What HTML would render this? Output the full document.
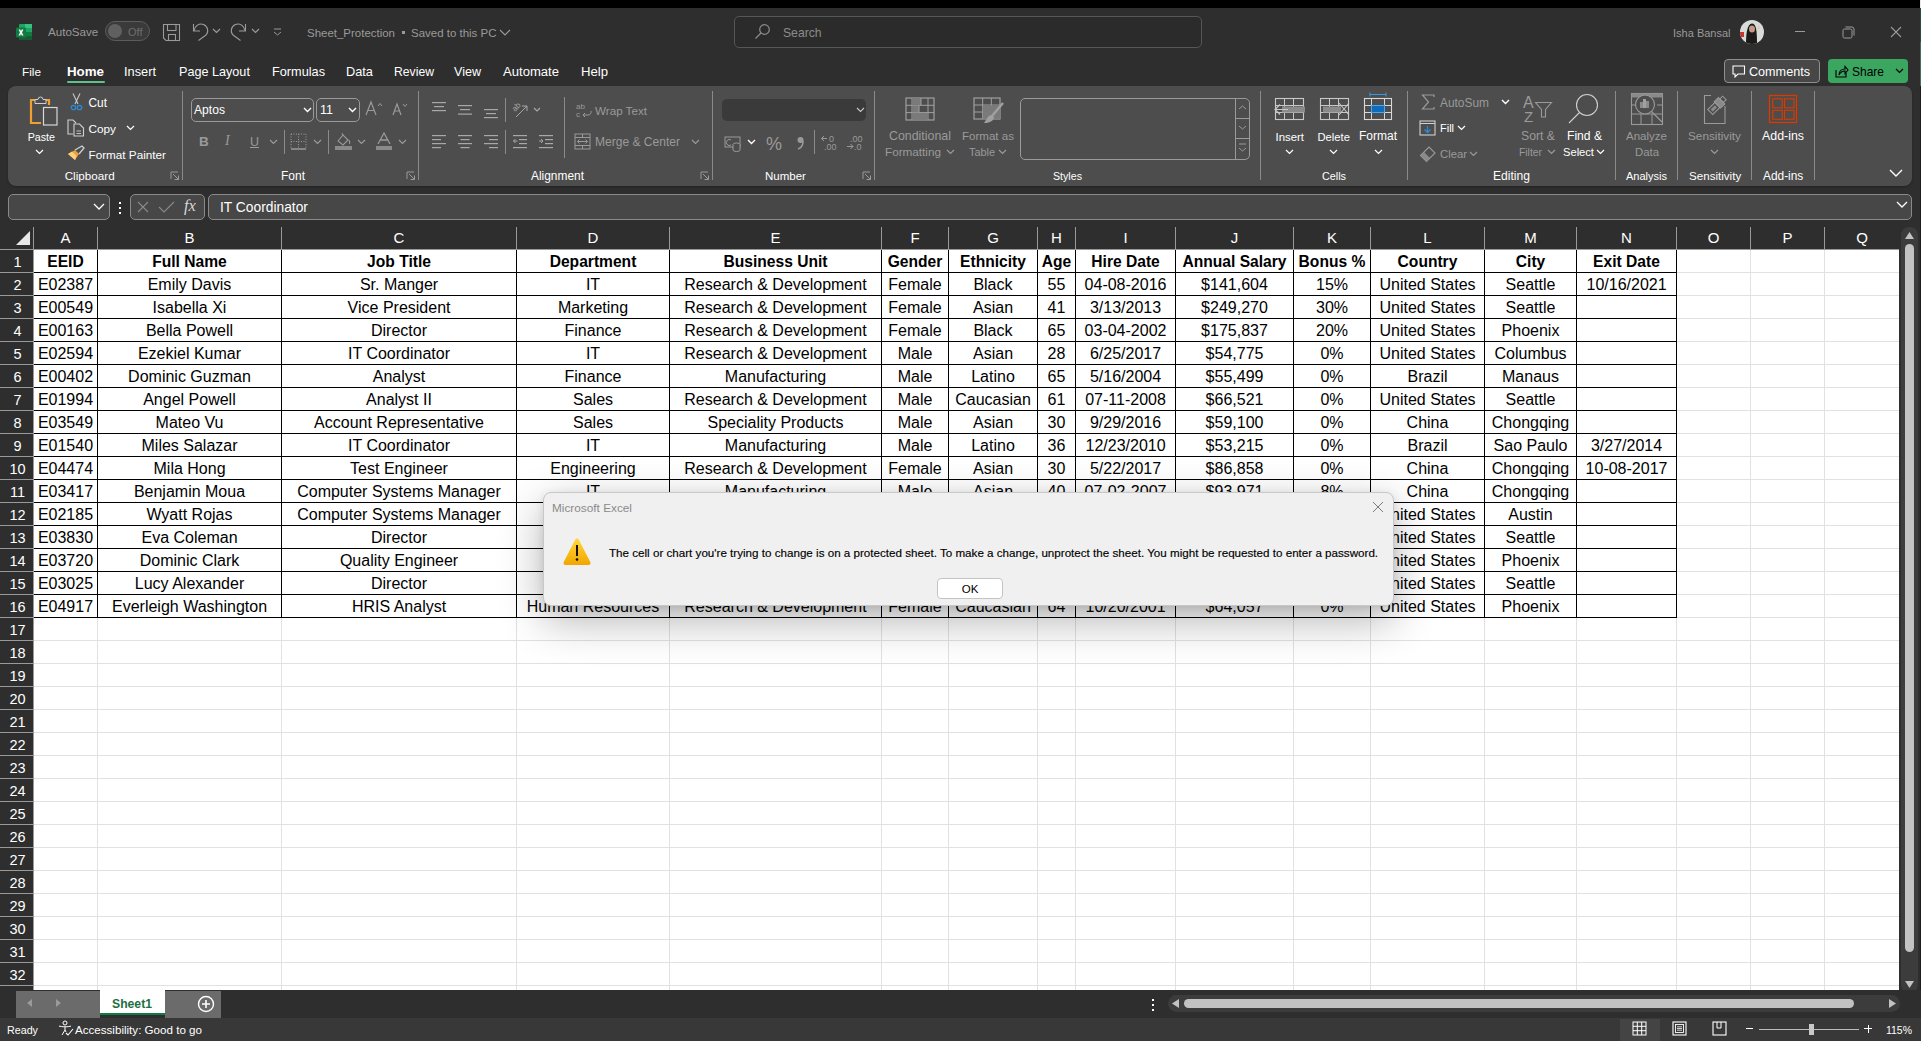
<!DOCTYPE html>
<html><head><meta charset="utf-8">
<style>
*{box-sizing:border-box;margin:0;padding:0}
html,body{width:1921px;height:1041px;overflow:hidden;background:#2e2e2e;font-family:"Liberation Sans",sans-serif;position:relative}
.a{position:absolute}
.s{position:absolute;overflow:visible}
.t{position:absolute;white-space:nowrap}
</style></head><body>
<div class="a" style="left:0;top:0;width:1921px;height:8px;background:#000"></div>
<div class="a" style="left:8px;top:86px;width:1904px;height:100px;background:#4d4d4d;border-radius:8px;box-shadow:0 1px 2px rgba(0,0,0,0.3)"></div>
<svg class="s" style="left:16px;top:24px;" width="17" height="17" viewBox="0 0 17 17"><rect x="3" y="0" width="13" height="16" rx="1" fill="#21a366"/>
<rect x="9" y="0" width="7" height="4" fill="#33c481"/><rect x="9" y="4" width="7" height="4" fill="#21a366"/>
<rect x="9" y="8" width="7" height="4" fill="#107c41"/><rect x="3" y="12" width="13" height="4" fill="#185c37"/>
<rect x="0" y="3.5" width="10" height="10" rx="1" fill="#107c41"/>
<path d="M2.6,5.6 L4.3,5.6 L5,7.3 L5.8,5.6 L7.4,5.6 L6,8.5 L7.5,11.4 L5.8,11.4 L5,9.7 L4.2,11.4 L2.5,11.4 L4,8.5 Z" fill="#fff"/></svg>
<div class="t" style="left:48.0px;top:26px;font-size:11.60px;line-height:12px;color:#9a9a9a;">AutoSave</div>
<div class="a" style="left:105px;top:21px;width:45px;height:20px;border:1.5px solid #5c5c5c;border-radius:10px;background:#3a3a3a"></div>
<div class="a" style="left:108px;top:24px;width:14px;height:14px;border-radius:50%;background:#606060"></div>
<div class="t" style="left:128.0px;top:26px;font-size:11.00px;line-height:12px;color:#6e6e6e;">Off</div>
<svg class="s" style="left:162px;top:22px;" width="19" height="19" viewBox="0 0 19 19"><path d="M1.5,2.5 H17.5 V18.5 H4 L1.5,16 Z" fill="none" stroke="#9a9a9a" stroke-width="1.1"/><rect x="5.5" y="2.5" width="8.5" height="6" fill="none" stroke="#9a9a9a" stroke-width="1.1"/><rect x="6.5" y="12.5" width="7" height="6" fill="none" stroke="#9a9a9a" stroke-width="1.1"/></svg>
<svg class="s" style="left:190px;top:21px;" width="20" height="22" viewBox="0 0 20 22"><path d="M3.5,3 V10 H10" fill="none" stroke="#9a9a9a" stroke-width="1.1"/><path d="M4.5,9.5 A6.6,6.6 0 1 1 16,14 L8.5,19.5" fill="none" stroke="#9a9a9a" stroke-width="1.1"/></svg>
<svg class="s" style="left:212px;top:28px;" width="9" height="6" viewBox="0 0 9 6"><polyline points="1,1 4.5,4.5 8,1" fill="none" stroke="#9a9a9a" stroke-width="1.2"/></svg>
<svg class="s" style="left:229px;top:21px;" width="20" height="22" viewBox="0 0 20 22"><g transform="translate(20,0) scale(-1,1)"><path d="M3.5,3 V10 H10" fill="none" stroke="#9a9a9a" stroke-width="1.1"/><path d="M4.5,9.5 A6.6,6.6 0 1 1 16,14 L8.5,19.5" fill="none" stroke="#9a9a9a" stroke-width="1.1"/></g></svg>
<svg class="s" style="left:251px;top:28px;" width="9" height="6" viewBox="0 0 9 6"><polyline points="1,1 4.5,4.5 8,1" fill="none" stroke="#9a9a9a" stroke-width="1.2"/></svg>
<svg class="s" style="left:272px;top:26px;" width="11" height="11" viewBox="0 0 11 11"><line x1="2" y1="3" x2="9" y2="3" stroke="#9a9a9a" stroke-width="1"/><polyline points="2,6 5.5,9 9,6" fill="none" stroke="#9a9a9a" stroke-width="1"/></svg>
<div class="t" style="left:307.0px;top:27px;font-size:11.47px;line-height:12px;color:#9a9a9a;">Sheet_Protection</div>
<div class="a" style="left:402px;top:31px;width:3px;height:3px;background:#9a9a9a"></div>
<div class="t" style="left:411.0px;top:27px;font-size:11.47px;line-height:12px;color:#9a9a9a;">Saved to this PC</div>
<svg class="s" style="left:499px;top:29px;" width="12" height="8" viewBox="0 0 12 8"><polyline points="1,1 6.0,6.0 11,1" fill="none" stroke="#9a9a9a" stroke-width="1.1"/></svg>
<div class="a" style="left:734px;top:16px;width:468px;height:32px;border:1px solid #565656;border-radius:5px;background:#2b2b2b"></div>
<svg class="s" style="left:754px;top:23px;" width="17" height="17" viewBox="0 0 17 17"><circle cx="10.5" cy="6.5" r="4.8" fill="none" stroke="#8c8c8c" stroke-width="1.2"/><line x1="7" y1="10" x2="1.5" y2="15.5" stroke="#8c8c8c" stroke-width="1.3"/></svg>
<div class="t" style="left:783.0px;top:26px;font-size:12.18px;line-height:14px;color:#8c8c8c;">Search</div>
<div class="t" style="left:1673.0px;top:27px;font-size:11.02px;line-height:12px;color:#9a9a9a;">Isha Bansal</div>
<svg class="s" style="left:1740px;top:20px;" width="24" height="24" viewBox="0 0 24 24"><defs><clipPath id="av"><circle cx="12" cy="12" r="12"/></clipPath></defs><g clip-path="url(#av)"><rect width="24" height="24" fill="#d8dcd8"/><path d="M6,24 C6,14 7,4 12,3.5 C16,3.5 17,10 17,24 Z" fill="#1b1b1b"/><ellipse cx="12" cy="9" rx="3" ry="3.6" fill="#c49a84"/><rect x="0" y="12" width="4" height="5" fill="#c8332c"/><path d="M17,9 L19,5 L20,9 Z" fill="#e8c8b0"/></g></svg>
<div class="a" style="left:1795px;top:31px;width:10px;height:1px;background:#9a9a9a"></div>
<svg class="s" style="left:1842px;top:26px;" width="13" height="13" viewBox="0 0 13 13"><rect x="1" y="3" width="9" height="9" rx="1.5" fill="none" stroke="#9a9a9a" stroke-width="1"/><path d="M3.5,1 H10 A2,2 0 0 1 12,3 V9.5" fill="none" stroke="#9a9a9a" stroke-width="1"/></svg>
<svg class="s" style="left:1890px;top:26px;" width="12" height="12" viewBox="0 0 12 12"><path d="M1,1 L11,11 M11,1 L1,11" stroke="#9a9a9a" stroke-width="1.1"/></svg>
<div class="a" style="left:1920px;top:8px;width:1px;height:1033px;background:#1c1c1c"></div>
<div class="a" style="left:1920px;top:0px;width:1px;height:8px;background:#e8e8e8"></div>
<div class="a" style="left:1920px;top:8px;width:1px;height:34px;background:#2e4843"></div>
<div class="a" style="left:1920px;top:42px;width:1px;height:44px;background:#4c6a64"></div>
<div class="t" style="left:22.0px;top:65px;font-size:11.79px;line-height:13px;color:#ffffff;">File</div>
<div class="t" style="left:67.0px;top:64px;font-size:13.32px;line-height:15px;color:#ffffff;font-weight:bold;">Home</div>
<div class="t" style="left:124.0px;top:64px;font-size:12.79px;line-height:15px;color:#ffffff;">Insert</div>
<div class="t" style="left:179.0px;top:65px;font-size:12.64px;line-height:14px;color:#ffffff;">Page Layout</div>
<div class="t" style="left:272.0px;top:64px;font-size:12.72px;line-height:15px;color:#ffffff;">Formulas</div>
<div class="t" style="left:346.0px;top:64px;font-size:12.78px;line-height:15px;color:#ffffff;">Data</div>
<div class="t" style="left:394.0px;top:65px;font-size:12.20px;line-height:14px;color:#ffffff;">Review</div>
<div class="t" style="left:454.0px;top:65px;font-size:12.56px;line-height:14px;color:#ffffff;">View</div>
<div class="t" style="left:503.0px;top:64px;font-size:13.08px;line-height:15px;color:#ffffff;">Automate</div>
<div class="t" style="left:581.0px;top:64px;font-size:13.13px;line-height:15px;color:#ffffff;">Help</div>
<div class="a" style="left:67px;top:81px;width:38px;height:2px;background:#5cc48b;border-radius:1px"></div>
<div class="a" style="left:1724px;top:59px;width:96px;height:24px;border:1px solid #8f8f8f;border-radius:4px;background:#474747"></div>
<svg class="s" style="left:1732px;top:65px;" width="14" height="13" viewBox="0 0 14 13"><path d="M1,1 H12.5 V9 H6 L3,12 V9 H1 Z" fill="none" stroke="#fff" stroke-width="1.1"/></svg>
<div class="t" style="left:1749.0px;top:65px;font-size:12.62px;line-height:14px;color:#fff;">Comments</div>
<div class="a" style="left:1828px;top:59px;width:80px;height:24px;border-radius:4px;background:#3aa660"></div>
<svg class="s" style="left:1835px;top:65px;" width="14" height="13" viewBox="0 0 14 13"><path d="M1,5 V12 H11 V8" fill="none" stroke="#000" stroke-width="1.1"/><path d="M4,10 C4,6 7,4 10,4 V1.5 L13,5 L10,8.5 V6 C8,6 5.5,7 4,10 Z" fill="none" stroke="#000" stroke-width="1.1"/></svg>
<div class="t" style="left:1852.0px;top:65px;font-size:11.99px;line-height:14px;color:#000;">Share</div>
<svg class="s" style="left:1895px;top:68px;" width="9" height="6" viewBox="0 0 9 6"><polyline points="1,1 4.5,4.5 8,1" fill="none" stroke="#000" stroke-width="1.2"/></svg>
<svg class="s" style="left:28px;top:94px;" width="31" height="33" viewBox="0 0 31 33"><path d="M3,6 H7 M14,6 H21 V11" fill="none" stroke="#f0a030" stroke-width="2.2"/><path d="M3,5 V29 H13" fill="none" stroke="#f0a030" stroke-width="2.2"/>
<path d="M7,9.5 V5.5 H10 A2.5,2.5 0 0 1 15,5.5 H18 V9.5 Z" fill="#4d4d4d" stroke="#d0d0d0" stroke-width="1"/>
<rect x="15.5" y="13.5" width="13.5" height="17.5" fill="#4d4d4d" stroke="#d8d8d8" stroke-width="1.2"/></svg>
<div class="t" style="left:27.7px;top:131px;font-size:10.68px;line-height:12px;color:#fff;">Paste</div>
<svg class="s" style="left:35px;top:149px;" width="9" height="6" viewBox="0 0 9 6"><polyline points="1,1 4.5,4.5 8,1" fill="none" stroke="#fff" stroke-width="1.2"/></svg>
<svg class="s" style="left:70px;top:93px;" width="13" height="18" viewBox="0 0 13 18"><path d="M3,0.5 L8,11 M10,0.5 L5,11" stroke="#c8c8c8" stroke-width="1.1" fill="none"/><circle cx="3.5" cy="14.5" r="2.2" fill="none" stroke="#2a8ad8" stroke-width="1.3"/><circle cx="9.5" cy="14.5" r="2.2" fill="none" stroke="#2a8ad8" stroke-width="1.3"/></svg>
<div class="t" style="left:88.5px;top:96px;font-size:11.89px;line-height:14px;color:#fff;">Cut</div>
<svg class="s" style="left:67px;top:119px;" width="18" height="18" viewBox="0 0 18 18"><path d="M6,15 H1 V1 H6 L9,4" fill="none" stroke="#d0d0d0" stroke-width="1.1"/><path d="M7,5 H12.5 L16.5,9 V17 H7 Z" fill="#4d4d4d" stroke="#d0d0d0" stroke-width="1.1"/><path d="M9.5,12 H14 M9.5,14.5 H14" stroke="#d0d0d0" stroke-width="0.9"/></svg>
<div class="t" style="left:88.5px;top:122px;font-size:11.78px;line-height:13px;color:#fff;">Copy</div>
<svg class="s" style="left:126px;top:125px;" width="9" height="6" viewBox="0 0 9 6"><polyline points="1,1 4.5,4.5 8,1" fill="none" stroke="#fff" stroke-width="1.2"/></svg>
<svg class="s" style="left:67px;top:145px;" width="18" height="18" viewBox="0 0 18 18"><path d="M1,9 L8,15 L12,9 L8,5 Z" fill="#f0a030"/><path d="M1,9 L5,6.5 L9.5,11 L8,15 Z" fill="#f7d080"/><path d="M8,5 L15,1 L17,3 L12,9" fill="none" stroke="#d0d0d0" stroke-width="1.3"/></svg>
<div class="t" style="left:88.5px;top:148px;font-size:11.72px;line-height:13px;color:#fff;">Format Painter</div>
<div class="t" style="left:64.7px;top:169px;font-size:11.68px;line-height:13px;color:#fff;">Clipboard</div>
<svg class="s" style="left:170px;top:171px;" width="10" height="10" viewBox="0 0 10 10"><path d="M1,8 V1 H8" fill="none" stroke="#9a9a9a" stroke-width="1"/><path d="M3,3 L8.5,8.5 M4.5,8.5 H8.5 V4.5" fill="none" stroke="#9a9a9a" stroke-width="1"/></svg>
<div class="a" style="left:182px;top:91px;width:1px;height:89px;background:#8a8a8a"></div>
<div class="a" style="left:191px;top:98px;width:123px;height:24px;border:1px solid #9a9a9a;border-radius:5px"></div>
<div class="t" style="left:194.0px;top:103px;font-size:12.12px;line-height:14px;color:#fff;">Aptos</div>
<svg class="s" style="left:303px;top:107px;" width="9" height="6" viewBox="0 0 9 6"><polyline points="1,1 4.5,4.5 8,1" fill="none" stroke="#fff" stroke-width="1.4"/></svg>
<div class="a" style="left:316px;top:98px;width:44px;height:24px;border:1px solid #9a9a9a;border-radius:5px"></div>
<div class="t" style="left:320.0px;top:103px;font-size:12.50px;line-height:14px;color:#fff;">11</div>
<svg class="s" style="left:348px;top:107px;" width="9" height="6" viewBox="0 0 9 6"><polyline points="1,1 4.5,4.5 8,1" fill="none" stroke="#fff" stroke-width="1.4"/></svg>
<svg class="s" style="left:365px;top:101px;" width="18" height="16" viewBox="0 0 18 16"><path d="M1,14 L6,1 L11,14 M3,9.5 H9" fill="none" stroke="#9a9a9a" stroke-width="1.2"/><polyline points="13,5 15,2.5 17,5" fill="none" stroke="#9a9a9a" stroke-width="1"/></svg>
<svg class="s" style="left:392px;top:102px;" width="17" height="15" viewBox="0 0 17 15"><path d="M1,13 L5,2 L9,13 M2.6,9 H7.4" fill="none" stroke="#9a9a9a" stroke-width="1.2"/><polyline points="11,2 13,4.5 15,2" fill="none" stroke="#9a9a9a" stroke-width="1"/></svg>
<div class="t" style="left:199.0px;top:134px;font-size:13.50px;line-height:15px;color:#9a9a9a;font-weight:bold;">B</div>
<div class="t" style="left:225.0px;top:133px;font-size:14.00px;line-height:16px;color:#9a9a9a;font-family:'Liberation Serif',serif;font-style:italic;">I</div>
<div class="t" style="left:250.0px;top:135px;font-size:12.50px;line-height:14px;color:#9a9a9a;">U</div>
<div class="a" style="left:250px;top:147px;width:9px;height:1px;background:#9a9a9a"></div>
<svg class="s" style="left:269px;top:139px;" width="9" height="6" viewBox="0 0 9 6"><polyline points="1,1 4.5,4.5 8,1" fill="none" stroke="#9a9a9a" stroke-width="1.2"/></svg>
<div class="a" style="left:284px;top:130px;width:1px;height:24px;background:#8a8a8a"></div>
<svg class="s" style="left:290px;top:133px;" width="17" height="17" viewBox="0 0 17 17"><path d="M1,1 H16 M1,8.5 H16 M1,1 V16 M8.5,1 V16 M16,1 V16" fill="none" stroke="#9a9a9a" stroke-width="1" stroke-dasharray="1,1.5"/><line x1="1" y1="16" x2="16" y2="16" stroke="#9a9a9a" stroke-width="1.5"/></svg>
<svg class="s" style="left:313px;top:139px;" width="9" height="6" viewBox="0 0 9 6"><polyline points="1,1 4.5,4.5 8,1" fill="none" stroke="#9a9a9a" stroke-width="1.2"/></svg>
<div class="a" style="left:328px;top:130px;width:1px;height:24px;background:#8a8a8a"></div>
<svg class="s" style="left:334px;top:132px;" width="19" height="20" viewBox="0 0 19 20"><path d="M4,9 L9,3 L14,8 L9,13 Z" fill="none" stroke="#9a9a9a" stroke-width="1.1"/><path d="M9,3 L8,1" stroke="#9a9a9a" stroke-width="1"/><path d="M15,8 C16,10 16,11 15.5,12" fill="none" stroke="#9a9a9a" stroke-width="1.2"/><rect x="1" y="14" width="17" height="4" fill="#8a8a8a"/></svg>
<svg class="s" style="left:357px;top:139px;" width="9" height="6" viewBox="0 0 9 6"><polyline points="1,1 4.5,4.5 8,1" fill="none" stroke="#9a9a9a" stroke-width="1.2"/></svg>
<svg class="s" style="left:375px;top:132px;" width="18" height="20" viewBox="0 0 18 20"><path d="M3,12 L9,1 L15,12 M5.2,8 H12.8" fill="none" stroke="#9a9a9a" stroke-width="1.3"/><rect x="1" y="14" width="16" height="4" fill="#8a8a8a"/></svg>
<svg class="s" style="left:398px;top:139px;" width="9" height="6" viewBox="0 0 9 6"><polyline points="1,1 4.5,4.5 8,1" fill="none" stroke="#9a9a9a" stroke-width="1.2"/></svg>
<div class="t" style="left:281.0px;top:169px;font-size:11.99px;line-height:14px;color:#fff;">Font</div>
<svg class="s" style="left:406px;top:171px;" width="10" height="10" viewBox="0 0 10 10"><path d="M1,8 V1 H8" fill="none" stroke="#9a9a9a" stroke-width="1"/><path d="M3,3 L8.5,8.5 M4.5,8.5 H8.5 V4.5" fill="none" stroke="#9a9a9a" stroke-width="1"/></svg>
<div class="a" style="left:418px;top:91px;width:1px;height:89px;background:#8a8a8a"></div>
<svg class="s" style="left:431px;top:100px;" width="16" height="20" viewBox="0 0 16 20"><rect x="1" y="2" width="14" height="1.2" fill="#a8a8a8"/><rect x="3" y="6" width="10" height="1.2" fill="#a8a8a8"/><rect x="1" y="10" width="14" height="1.2" fill="#a8a8a8"/></svg>
<svg class="s" style="left:457px;top:100px;" width="16" height="20" viewBox="0 0 16 20"><rect x="1" y="5" width="14" height="1.2" fill="#a8a8a8"/><rect x="3" y="9" width="10" height="1.2" fill="#a8a8a8"/><rect x="1" y="13.5" width="14" height="1.2" fill="#a8a8a8"/></svg>
<svg class="s" style="left:483px;top:100px;" width="16" height="20" viewBox="0 0 16 20"><rect x="1" y="9" width="14" height="1.2" fill="#a8a8a8"/><rect x="3" y="13" width="10" height="1.2" fill="#a8a8a8"/><rect x="1" y="17" width="14" height="1.2" fill="#a8a8a8"/></svg>
<div class="a" style="left:505px;top:98px;width:1px;height:24px;background:#8a8a8a"></div>
<svg class="s" style="left:511px;top:100px;" width="19" height="19" viewBox="0 0 19 19"><text x="1" y="9" font-size="8" fill="#a8a8a8" transform="rotate(-45 6 7)" font-family="Liberation Sans">ab</text><path d="M5,17 L16,6 M11,6 H16 V11" fill="none" stroke="#a8a8a8" stroke-width="1"/></svg>
<svg class="s" style="left:533px;top:107px;" width="8" height="6" viewBox="0 0 8 6"><polyline points="1,1 4.0,4.0 7,1" fill="none" stroke="#a8a8a8" stroke-width="1.2"/></svg>
<div class="a" style="left:564px;top:97px;width:1px;height:61px;background:#8a8a8a"></div>
<svg class="s" style="left:576px;top:102px;" width="17" height="17" viewBox="0 0 17 17"><text x="0" y="7" font-size="8" fill="#9a9a9a" font-family="Liberation Sans">ab</text><text x="0" y="15" font-size="8" fill="#9a9a9a" font-family="Liberation Sans">c</text><path d="M15,9 A3,3 0 0 1 12,13 H7 M9,11 L7,13 L9,15" fill="none" stroke="#9a9a9a" stroke-width="1"/></svg>
<div class="t" style="left:595.0px;top:104px;font-size:11.65px;line-height:13px;color:#9a9a9a;">Wrap Text</div>
<svg class="s" style="left:431px;top:133px;" width="16" height="20" viewBox="0 0 16 20"><rect x="1" y="2" width="14" height="1.2" fill="#a8a8a8"/><rect x="1" y="6" width="9" height="1.2" fill="#a8a8a8"/><rect x="1" y="10" width="14" height="1.2" fill="#a8a8a8"/><rect x="1" y="14" width="9" height="1.2" fill="#a8a8a8"/></svg>
<svg class="s" style="left:457px;top:133px;" width="16" height="20" viewBox="0 0 16 20"><rect x="1" y="2" width="14" height="1.2" fill="#a8a8a8"/><rect x="3.5" y="6" width="9" height="1.2" fill="#a8a8a8"/><rect x="1" y="10" width="14" height="1.2" fill="#a8a8a8"/><rect x="3.5" y="14" width="9" height="1.2" fill="#a8a8a8"/></svg>
<svg class="s" style="left:483px;top:133px;" width="16" height="20" viewBox="0 0 16 20"><rect x="1" y="2" width="14" height="1.2" fill="#a8a8a8"/><rect x="6" y="6" width="9" height="1.2" fill="#a8a8a8"/><rect x="1" y="10" width="14" height="1.2" fill="#a8a8a8"/><rect x="6" y="14" width="9" height="1.2" fill="#a8a8a8"/></svg>
<div class="a" style="left:505px;top:130px;width:1px;height:24px;background:#8a8a8a"></div>
<svg class="s" style="left:512px;top:133px;" width="16" height="20" viewBox="0 0 16 20"><rect x="1" y="2" width="14" height="1.2" fill="#a8a8a8"/><rect x="7" y="6" width="8" height="1.2" fill="#a8a8a8"/><rect x="7" y="10" width="8" height="1.2" fill="#a8a8a8"/><rect x="1" y="14" width="14" height="1.2" fill="#a8a8a8"/><path d="M5.5,8 H1.5 M3.5,6 L1.5,8 L3.5,10" fill="none" stroke="#a8a8a8" stroke-width="1"/></svg>
<svg class="s" style="left:538px;top:133px;" width="16" height="20" viewBox="0 0 16 20"><rect x="1" y="2" width="14" height="1.2" fill="#a8a8a8"/><rect x="7" y="6" width="8" height="1.2" fill="#a8a8a8"/><rect x="7" y="10" width="8" height="1.2" fill="#a8a8a8"/><rect x="1" y="14" width="14" height="1.2" fill="#a8a8a8"/><path d="M1,8 H5 M3,6 L5,8 L3,10" fill="none" stroke="#a8a8a8" stroke-width="1"/></svg>
<svg class="s" style="left:574px;top:133px;" width="17" height="17" viewBox="0 0 17 17"><rect x="1" y="1" width="15" height="15" fill="none" stroke="#9a9a9a" stroke-width="1"/><path d="M1,4.5 H16 M1,12.5 H16 M8.5,1 V4.5 M8.5,12.5 V16" stroke="#9a9a9a" stroke-width="1"/><path d="M3.5,8.5 H13.5 M5.5,6.5 L3.5,8.5 L5.5,10.5 M11.5,6.5 L13.5,8.5 L11.5,10.5" fill="none" stroke="#9a9a9a" stroke-width="1"/></svg>
<div class="t" style="left:595.0px;top:135px;font-size:12.04px;line-height:14px;color:#9a9a9a;">Merge &amp; Center</div>
<svg class="s" style="left:691px;top:139px;" width="9" height="6" viewBox="0 0 9 6"><polyline points="1,1 4.5,4.5 8,1" fill="none" stroke="#9a9a9a" stroke-width="1.2"/></svg>
<div class="t" style="left:531.0px;top:169px;font-size:11.92px;line-height:14px;color:#fff;">Alignment</div>
<svg class="s" style="left:700px;top:171px;" width="10" height="10" viewBox="0 0 10 10"><path d="M1,8 V1 H8" fill="none" stroke="#9a9a9a" stroke-width="1"/><path d="M3,3 L8.5,8.5 M4.5,8.5 H8.5 V4.5" fill="none" stroke="#9a9a9a" stroke-width="1"/></svg>
<div class="a" style="left:712px;top:91px;width:1px;height:89px;background:#8a8a8a"></div>
<div class="a" style="left:722px;top:99px;width:144px;height:22px;background:#3a3a3a;border-radius:5px"></div>
<svg class="s" style="left:856px;top:107px;" width="9" height="6" viewBox="0 0 9 6"><polyline points="1,1 4.5,4.5 8,1" fill="none" stroke="#c8c8c8" stroke-width="1.1"/></svg>
<svg class="s" style="left:724px;top:136px;" width="18" height="16" viewBox="0 0 18 16"><rect x="1" y="1" width="15" height="10" fill="none" stroke="#9a9a9a" stroke-width="1"/><path d="M7,4 A3,3 0 1 0 7,9" fill="none" stroke="#9a9a9a" stroke-width="1"/><ellipse cx="12.5" cy="8.5" rx="3.5" ry="1.5" fill="#4d4d4d" stroke="#9a9a9a" stroke-width="1"/><path d="M9,8.5 V14 A3.5,1.5 0 0 0 16,14 V8.5" fill="#4d4d4d" stroke="#9a9a9a" stroke-width="1"/></svg>
<svg class="s" style="left:747px;top:139px;" width="9" height="6" viewBox="0 0 9 6"><polyline points="1,1 4.5,4.5 8,1" fill="none" stroke="#fff" stroke-width="1.4"/></svg>
<div class="t" style="left:766.0px;top:134px;font-size:17.99px;line-height:20px;color:#9a9a9a;">%</div>
<svg class="s" style="left:796px;top:136px;" width="9" height="14" viewBox="0 0 9 14"><circle cx="4.5" cy="4" r="3" fill="#9a9a9a"/><path d="M7,5 C7,9 5,12 2,13" fill="none" stroke="#9a9a9a" stroke-width="1.6"/></svg>
<div class="a" style="left:814px;top:130px;width:1px;height:24px;background:#8a8a8a"></div>
<svg class="s" style="left:820px;top:133px;" width="17" height="18" viewBox="0 0 17 18"><path d="M7,5.5 H1.5 M4,3 L1.5,5.5 L4,8" fill="none" stroke="#9a9a9a" stroke-width="1"/><text x="9" y="9" font-size="9" fill="#9a9a9a" font-family="Liberation Sans">0</text><text x="4" y="17" font-size="9" fill="#9a9a9a" font-family="Liberation Sans">.00</text></svg>
<svg class="s" style="left:846px;top:133px;" width="17" height="18" viewBox="0 0 17 18"><text x="4" y="9" font-size="9" fill="#9a9a9a" font-family="Liberation Sans">.00</text><path d="M1,13.5 H7 M4.5,11 L7,13.5 L4.5,16" fill="none" stroke="#9a9a9a" stroke-width="1"/><text x="8" y="17" font-size="9" fill="#9a9a9a" font-family="Liberation Sans">.0</text></svg>
<div class="t" style="left:765.0px;top:170px;font-size:11.53px;line-height:12px;color:#fff;">Number</div>
<svg class="s" style="left:862px;top:171px;" width="10" height="10" viewBox="0 0 10 10"><path d="M1,8 V1 H8" fill="none" stroke="#9a9a9a" stroke-width="1"/><path d="M3,3 L8.5,8.5 M4.5,8.5 H8.5 V4.5" fill="none" stroke="#9a9a9a" stroke-width="1"/></svg>
<div class="a" style="left:874px;top:91px;width:1px;height:89px;background:#8a8a8a"></div>
<svg class="s" style="left:905px;top:97px;" width="30" height="24" viewBox="0 0 30 24"><rect x="1" y="1" width="28" height="22" fill="none" stroke="#a0a0a0" stroke-width="1.2"/><path d="M1,8.3 H29 M1,15.6 H29 M7,1 V23 M23,1 V23" stroke="#a0a0a0" stroke-width="1"/><rect x="7" y="1.5" width="9" height="6.5" fill="#7a7a7a"/><rect x="7" y="8.8" width="7" height="6.5" fill="#7a7a7a"/><rect x="7" y="16" width="16" height="6.5" fill="#7a7a7a"/><path d="M16,1 V8.3 M14,8.3 V15.6" stroke="#a0a0a0" stroke-width="1"/></svg>
<div class="t" style="left:889.0px;top:129px;font-size:12.39px;line-height:14px;color:#9a9a9a;">Conditional</div>
<div class="t" style="left:885.0px;top:145px;font-size:11.72px;line-height:13px;color:#9a9a9a;">Formatting</div>
<svg class="s" style="left:946px;top:149px;" width="9" height="6" viewBox="0 0 9 6"><polyline points="1,1 4.5,4.5 8,1" fill="none" stroke="#9a9a9a" stroke-width="1.2"/></svg>
<svg class="s" style="left:973px;top:97px;" width="32" height="30" viewBox="0 0 32 30"><rect x="1" y="1" width="26" height="21" fill="none" stroke="#a0a0a0" stroke-width="1.2"/><path d="M1,8 H27 M1,15 H27 M9.7,1 V22 M18.3,1 V22" stroke="#a0a0a0" stroke-width="1"/><rect x="10" y="8.5" width="17" height="13" fill="#7a7a7a"/><path d="M30,6 L19,19" stroke="#a0a0a0" stroke-width="2.5"/><path d="M19,18 C15,18 14,22 11,26 C16,26 21,24 21,20 Z" fill="#a0a0a0"/></svg>
<div class="t" style="left:962.0px;top:130px;font-size:11.55px;line-height:12px;color:#9a9a9a;">Format as</div>
<div class="t" style="left:969.0px;top:146px;font-size:10.88px;line-height:12px;color:#9a9a9a;">Table</div>
<svg class="s" style="left:998px;top:149px;" width="9" height="6" viewBox="0 0 9 6"><polyline points="1,1 4.5,4.5 8,1" fill="none" stroke="#9a9a9a" stroke-width="1.2"/></svg>
<div class="a" style="left:1020px;top:98px;width:230px;height:62px;border:1px solid #9a9a9a;border-radius:5px"></div>
<div class="a" style="left:1235px;top:98px;width:1px;height:62px;background:#9a9a9a"></div>
<div class="a" style="left:1235px;top:118px;width:15px;height:1px;background:#9a9a9a"></div>
<div class="a" style="left:1235px;top:138px;width:15px;height:1px;background:#9a9a9a"></div>
<svg class="s" style="left:1237px;top:104px;" width="11" height="8" viewBox="0 0 11 8"><polyline points="2,5 5.5,2 9,5" fill="none" stroke="#9a9a9a" stroke-width="1"/></svg>
<svg class="s" style="left:1237px;top:124px;" width="11" height="8" viewBox="0 0 11 8"><polyline points="2,2 5.5,5 9,2" fill="none" stroke="#9a9a9a" stroke-width="1"/></svg>
<svg class="s" style="left:1237px;top:142px;" width="11" height="12" viewBox="0 0 11 12"><line x1="2" y1="2" x2="9" y2="2" stroke="#9a9a9a" stroke-width="1"/><polyline points="2,6 5.5,9 9,6" fill="none" stroke="#9a9a9a" stroke-width="1"/></svg>
<div class="t" style="left:1053.0px;top:170px;font-size:10.65px;line-height:12px;color:#fff;">Styles</div>
<div class="a" style="left:1260px;top:91px;width:1px;height:89px;background:#8a8a8a"></div>
<svg class="s" style="left:1273px;top:97px;" width="34" height="24" viewBox="0 0 34 24"><rect x="2.5" y="1.5" width="28" height="21" fill="none" stroke="#c8c8c8" stroke-width="1.1"/><path d="M11.5,1.5 V22.5 M20.5,1.5 V22.5 M2.5,8.5 H30.5 M2.5,15.5 H30.5" stroke="#c8c8c8" stroke-width="1"/><rect x="9" y="9.5" width="23" height="6" fill="#8a8a8a"/><path d="M15,12.5 H2 M7,7.5 L2,12.5 L7,17.5" fill="none" stroke="#c8c8c8" stroke-width="1.1"/></svg>
<div class="t" style="left:1275.5px;top:131px;font-size:11.39px;line-height:12px;color:#fff;">Insert</div>
<svg class="s" style="left:1285px;top:149px;" width="9" height="6" viewBox="0 0 9 6"><polyline points="1,1 4.5,4.5 8,1" fill="none" stroke="#fff" stroke-width="1.2"/></svg>
<svg class="s" style="left:1318px;top:97px;" width="34" height="24" viewBox="0 0 34 24"><rect x="2.5" y="1.5" width="28" height="21" fill="none" stroke="#c8c8c8" stroke-width="1.1"/><path d="M11.5,1.5 V22.5 M20.5,1.5 V22.5 M2.5,8.5 H30.5 M2.5,15.5 H30.5" stroke="#c8c8c8" stroke-width="1"/><rect x="5" y="9.5" width="18" height="6" fill="#8a8a8a"/><path d="M21,6 L31,18 M31,6 L21,18" stroke="#c8c8c8" stroke-width="1.1"/></svg>
<div class="t" style="left:1317.5px;top:131px;font-size:11.24px;line-height:12px;color:#fff;">Delete</div>
<svg class="s" style="left:1329px;top:149px;" width="9" height="6" viewBox="0 0 9 6"><polyline points="1,1 4.5,4.5 8,1" fill="none" stroke="#fff" stroke-width="1.2"/></svg>
<svg class="s" style="left:1363px;top:92px;" width="30" height="29" viewBox="0 0 30 29"><path d="M7,2.5 H23 M7,0.5 V4.5 M23,0.5 V4.5" stroke="#3a96dd" stroke-width="1.1"/><rect x="1.5" y="6.5" width="27" height="21" fill="none" stroke="#d8d8d8" stroke-width="1.1"/><path d="M8.5,6.5 V27.5 M21.5,6.5 V27.5 M1.5,13.5 H28.5 M1.5,20.5 H28.5" stroke="#d8d8d8" stroke-width="1"/><rect x="8.5" y="13.5" width="13" height="7" fill="#0f6cbd" stroke="#4aa8f0" stroke-width="1"/></svg>
<div class="t" style="left:1359.0px;top:129px;font-size:12.00px;line-height:14px;color:#fff;">Format</div>
<svg class="s" style="left:1374px;top:149px;" width="9" height="6" viewBox="0 0 9 6"><polyline points="1,1 4.5,4.5 8,1" fill="none" stroke="#fff" stroke-width="1.2"/></svg>
<div class="t" style="left:1322.0px;top:170px;font-size:10.80px;line-height:12px;color:#fff;">Cells</div>
<div class="a" style="left:1407px;top:91px;width:1px;height:89px;background:#8a8a8a"></div>
<svg class="s" style="left:1421px;top:94px;" width="15" height="16" viewBox="0 0 15 16"><path d="M13,3 V1 H1.5 L7.5,8 L1.5,15 H13 V13" fill="none" stroke="#9a9a9a" stroke-width="1.2"/></svg>
<div class="t" style="left:1440.0px;top:96px;font-size:11.91px;line-height:14px;color:#9a9a9a;">AutoSum</div>
<svg class="s" style="left:1501px;top:99px;" width="9" height="6" viewBox="0 0 9 6"><polyline points="1,1 4.5,4.5 8,1" fill="none" stroke="#fff" stroke-width="1.4"/></svg>
<svg class="s" style="left:1419px;top:120px;" width="18" height="17" viewBox="0 0 18 17"><rect x="1" y="1" width="15" height="14" fill="none" stroke="#d0d0d0" stroke-width="1.1"/><line x1="1" y1="3.5" x2="16" y2="3.5" stroke="#d0d0d0" stroke-width="1"/><path d="M8.5,6 V12.5 M5.5,9.5 L8.5,12.5 L11.5,9.5" fill="none" stroke="#2a8ad8" stroke-width="1.3"/></svg>
<div class="t" style="left:1440.0px;top:122px;font-size:10.97px;line-height:12px;color:#fff;">Fill</div>
<svg class="s" style="left:1457px;top:125px;" width="9" height="6" viewBox="0 0 9 6"><polyline points="1,1 4.5,4.5 8,1" fill="none" stroke="#fff" stroke-width="1.2"/></svg>
<svg class="s" style="left:1419px;top:145px;" width="18" height="18" viewBox="0 0 18 18"><path d="M1.5,10.5 L10,2 L16,8 L7.5,16.5 Z" fill="none" stroke="#9a9a9a" stroke-width="1.1"/><path d="M1.5,10.5 L5,7 L11,13 L7.5,16.5 Z" fill="#8a8a8a"/></svg>
<div class="t" style="left:1440.0px;top:148px;font-size:11.30px;line-height:12px;color:#9a9a9a;">Clear</div>
<svg class="s" style="left:1469px;top:151px;" width="9" height="6" viewBox="0 0 9 6"><polyline points="1,1 4.5,4.5 8,1" fill="none" stroke="#9a9a9a" stroke-width="1.2"/></svg>
<svg class="s" style="left:1523px;top:95px;" width="31" height="28" viewBox="0 0 31 28"><text x="0" y="13" font-size="16" fill="#9a9a9a" font-family="Liberation Sans">A</text><text x="1" y="27" font-size="15" fill="#9a9a9a" font-family="Liberation Sans">Z</text><path d="M12.5,7.5 H28.5 L22.5,14.5 V22 H18.5 V14.5 Z" fill="none" stroke="#9a9a9a" stroke-width="1.1"/></svg>
<div class="t" style="left:1521.0px;top:129px;font-size:12.23px;line-height:14px;color:#9a9a9a;">Sort &amp;</div>
<div class="t" style="left:1519.0px;top:147px;font-size:10.35px;line-height:11px;color:#9a9a9a;">Filter</div>
<svg class="s" style="left:1547px;top:149px;" width="9" height="6" viewBox="0 0 9 6"><polyline points="1,1 4.5,4.5 8,1" fill="none" stroke="#9a9a9a" stroke-width="1.2"/></svg>
<svg class="s" style="left:1568px;top:94px;" width="31" height="31" viewBox="0 0 31 31"><circle cx="19" cy="11" r="10.5" fill="none" stroke="#d0d0d0" stroke-width="1.1"/><line x1="11.5" y1="18.5" x2="1" y2="29" stroke="#d0d0d0" stroke-width="1.1"/></svg>
<div class="t" style="left:1567.0px;top:129px;font-size:12.11px;line-height:14px;color:#fff;">Find &amp;</div>
<div class="t" style="left:1563.0px;top:146px;font-size:11.15px;line-height:12px;color:#fff;">Select</div>
<svg class="s" style="left:1596px;top:149px;" width="9" height="6" viewBox="0 0 9 6"><polyline points="1,1 4.5,4.5 8,1" fill="none" stroke="#fff" stroke-width="1.2"/></svg>
<div class="t" style="left:1493.0px;top:169px;font-size:12.10px;line-height:14px;color:#fff;">Editing</div>
<div class="a" style="left:1615px;top:91px;width:1px;height:89px;background:#8a8a8a"></div>
<svg class="s" style="left:1630px;top:92px;" width="34" height="34" viewBox="0 0 34 34"><rect x="1.5" y="1.5" width="31" height="31" fill="none" stroke="#9a9a9a" stroke-width="1.1"/><rect x="1.5" y="1.5" width="31" height="4" fill="#8a8a8a"/><path d="M1.5,22 H32.5 M1.5,13 H6 M27,13 H32.5 M11,22 V32.5 M22,22 V32.5" stroke="#9a9a9a" stroke-width="1"/><circle cx="15" cy="12.5" r="9.5" fill="#4d4d4d" stroke="#9a9a9a" stroke-width="1.1"/><rect x="10" y="10" width="3" height="6" fill="#8a8a8a"/><rect x="13" y="7" width="3" height="9" fill="#a0a0a0"/><rect x="16" y="9" width="3" height="7" fill="#8a8a8a"/><line x1="21.5" y1="19.5" x2="32" y2="30" stroke="#9a9a9a" stroke-width="1.2"/></svg>
<div class="t" style="left:1626.0px;top:130px;font-size:11.52px;line-height:12px;color:#9a9a9a;">Analyze</div>
<div class="t" style="left:1635.0px;top:146px;font-size:11.36px;line-height:12px;color:#9a9a9a;">Data</div>
<div class="t" style="left:1626.0px;top:170px;font-size:11.01px;line-height:12px;color:#fff;">Analysis</div>
<div class="a" style="left:1677px;top:91px;width:1px;height:89px;background:#8a8a8a"></div>
<svg class="s" style="left:1700px;top:92px;" width="30" height="33" viewBox="0 0 30 33"><path d="M11,3.5 H4.5 V31.5 H25 V14" fill="none" stroke="#9a9a9a" stroke-width="1.1"/><g transform="rotate(-45 17 14)"><rect x="8" y="10" width="10" height="7" fill="none" stroke="#9a9a9a" stroke-width="1.1"/><rect x="10" y="12" width="6" height="3" fill="#8a8a8a"/><rect x="18" y="9" width="6" height="9" fill="#8a8a8a" stroke="#9a9a9a" stroke-width="1"/><rect x="24" y="11" width="4" height="5" fill="none" stroke="#9a9a9a" stroke-width="1"/></g></svg>
<div class="t" style="left:1688.0px;top:129px;font-size:11.77px;line-height:13px;color:#9a9a9a;">Sensitivity</div>
<svg class="s" style="left:1710px;top:149px;" width="9" height="6" viewBox="0 0 9 6"><polyline points="1,1 4.5,4.5 8,1" fill="none" stroke="#9a9a9a" stroke-width="1.2"/></svg>
<div class="t" style="left:1689.0px;top:170px;font-size:11.60px;line-height:12px;color:#fff;">Sensitivity</div>
<div class="a" style="left:1751px;top:91px;width:1px;height:89px;background:#8a8a8a"></div>
<svg class="s" style="left:1768px;top:94px;" width="30" height="30" viewBox="0 0 30 30"><rect x="1.5" y="1.5" width="27" height="27" fill="none" stroke="#d83b01" stroke-width="1.3"/><rect x="4.8" y="4.8" width="9.5" height="9" fill="none" stroke="#d83b01" stroke-width="1.15"/><rect x="16.5" y="4.8" width="9.5" height="9" fill="none" stroke="#d83b01" stroke-width="1.15"/><rect x="4.8" y="16.3" width="9.5" height="9" fill="none" stroke="#d83b01" stroke-width="1.15"/><rect x="16.5" y="16.3" width="9.5" height="9" fill="none" stroke="#d83b01" stroke-width="1.15"/></svg>
<div class="t" style="left:1762.0px;top:129px;font-size:12.39px;line-height:14px;color:#fff;">Add-ins</div>
<div class="t" style="left:1763.0px;top:169px;font-size:11.90px;line-height:14px;color:#fff;">Add-ins</div>
<div class="a" style="left:1814px;top:91px;width:1px;height:89px;background:#8a8a8a"></div>
<svg class="s" style="left:1888px;top:168px;" width="16" height="10" viewBox="0 0 16 10"><polyline points="2,2 8,8 14,2" fill="none" stroke="#fff" stroke-width="1.4"/></svg>
<div class="a" style="left:8px;top:194px;width:102px;height:26px;border:1px solid #8a8a8a;border-radius:5px;background:#474747"></div>
<svg class="s" style="left:93px;top:203px;" width="12" height="8" viewBox="0 0 12 8"><polyline points="1,1 6.0,6.0 11,1" fill="none" stroke="#fff" stroke-width="1.3"/></svg>
<div class="a" style="left:119px;top:202px;width:2px;height:2px;background:#fff"></div>
<div class="a" style="left:119px;top:207px;width:2px;height:2px;background:#fff"></div>
<div class="a" style="left:119px;top:212px;width:2px;height:2px;background:#fff"></div>
<div class="a" style="left:130px;top:194px;width:75px;height:26px;border:1px solid #8a8a8a;border-radius:5px;background:#474747"></div>
<svg class="s" style="left:137px;top:201px;" width="12" height="12" viewBox="0 0 12 12"><path d="M1,1 L11,11 M11,1 L1,11" stroke="#8a8a8a" stroke-width="1.1"/></svg>
<svg class="s" style="left:158px;top:201px;" width="17" height="12" viewBox="0 0 17 12"><polyline points="1,6 6,11 16,1" fill="none" stroke="#8a8a8a" stroke-width="1.1"/></svg>
<div class="t" style="left:184.0px;top:197px;font-size:16.50px;line-height:18px;color:#d8d8d8;font-family:'Liberation Serif',serif;font-style:italic;">fx</div>
<div class="a" style="left:208px;top:194px;width:1704px;height:26px;border:1px solid #8a8a8a;border-radius:5px;background:#474747"></div>
<div class="t" style="left:220.0px;top:200px;font-size:13.81px;line-height:15px;color:#fff;">IT Coordinator</div>
<svg class="s" style="left:1896px;top:201px;" width="12" height="8" viewBox="0 0 12 8"><polyline points="1,1 6.0,6.0 11,1" fill="none" stroke="#fff" stroke-width="1.3"/></svg>
<div class="a" style="left:34px;top:250px;width:1865px;height:740px;background:#fff"></div>
<div class="a" style="left:0px;top:227px;width:1899px;height:22px;background:#2e2e2e"></div>
<div class="a" style="left:0px;top:250px;width:33px;height:740px;background:#2e2e2e"></div>
<div class="a" style="left:97px;top:250px;width:1px;height:740px;background:#e1e1e1"></div>
<div class="a" style="left:281px;top:250px;width:1px;height:740px;background:#e1e1e1"></div>
<div class="a" style="left:516px;top:250px;width:1px;height:740px;background:#e1e1e1"></div>
<div class="a" style="left:669px;top:250px;width:1px;height:740px;background:#e1e1e1"></div>
<div class="a" style="left:881px;top:250px;width:1px;height:740px;background:#e1e1e1"></div>
<div class="a" style="left:948px;top:250px;width:1px;height:740px;background:#e1e1e1"></div>
<div class="a" style="left:1037px;top:250px;width:1px;height:740px;background:#e1e1e1"></div>
<div class="a" style="left:1075px;top:250px;width:1px;height:740px;background:#e1e1e1"></div>
<div class="a" style="left:1175px;top:250px;width:1px;height:740px;background:#e1e1e1"></div>
<div class="a" style="left:1293px;top:250px;width:1px;height:740px;background:#e1e1e1"></div>
<div class="a" style="left:1370px;top:250px;width:1px;height:740px;background:#e1e1e1"></div>
<div class="a" style="left:1484px;top:250px;width:1px;height:740px;background:#e1e1e1"></div>
<div class="a" style="left:1576px;top:250px;width:1px;height:740px;background:#e1e1e1"></div>
<div class="a" style="left:1676px;top:250px;width:1px;height:740px;background:#e1e1e1"></div>
<div class="a" style="left:1750px;top:250px;width:1px;height:740px;background:#e1e1e1"></div>
<div class="a" style="left:1824px;top:250px;width:1px;height:740px;background:#e1e1e1"></div>
<div class="a" style="left:34px;top:272px;width:1865px;height:1px;background:#e1e1e1"></div>
<div class="a" style="left:34px;top:295px;width:1865px;height:1px;background:#e1e1e1"></div>
<div class="a" style="left:34px;top:318px;width:1865px;height:1px;background:#e1e1e1"></div>
<div class="a" style="left:34px;top:341px;width:1865px;height:1px;background:#e1e1e1"></div>
<div class="a" style="left:34px;top:364px;width:1865px;height:1px;background:#e1e1e1"></div>
<div class="a" style="left:34px;top:387px;width:1865px;height:1px;background:#e1e1e1"></div>
<div class="a" style="left:34px;top:410px;width:1865px;height:1px;background:#e1e1e1"></div>
<div class="a" style="left:34px;top:433px;width:1865px;height:1px;background:#e1e1e1"></div>
<div class="a" style="left:34px;top:456px;width:1865px;height:1px;background:#e1e1e1"></div>
<div class="a" style="left:34px;top:479px;width:1865px;height:1px;background:#e1e1e1"></div>
<div class="a" style="left:34px;top:502px;width:1865px;height:1px;background:#e1e1e1"></div>
<div class="a" style="left:34px;top:525px;width:1865px;height:1px;background:#e1e1e1"></div>
<div class="a" style="left:34px;top:548px;width:1865px;height:1px;background:#e1e1e1"></div>
<div class="a" style="left:34px;top:571px;width:1865px;height:1px;background:#e1e1e1"></div>
<div class="a" style="left:34px;top:594px;width:1865px;height:1px;background:#e1e1e1"></div>
<div class="a" style="left:34px;top:617px;width:1865px;height:1px;background:#e1e1e1"></div>
<div class="a" style="left:34px;top:640px;width:1865px;height:1px;background:#e1e1e1"></div>
<div class="a" style="left:34px;top:663px;width:1865px;height:1px;background:#e1e1e1"></div>
<div class="a" style="left:34px;top:686px;width:1865px;height:1px;background:#e1e1e1"></div>
<div class="a" style="left:34px;top:709px;width:1865px;height:1px;background:#e1e1e1"></div>
<div class="a" style="left:34px;top:732px;width:1865px;height:1px;background:#e1e1e1"></div>
<div class="a" style="left:34px;top:755px;width:1865px;height:1px;background:#e1e1e1"></div>
<div class="a" style="left:34px;top:778px;width:1865px;height:1px;background:#e1e1e1"></div>
<div class="a" style="left:34px;top:801px;width:1865px;height:1px;background:#e1e1e1"></div>
<div class="a" style="left:34px;top:824px;width:1865px;height:1px;background:#e1e1e1"></div>
<div class="a" style="left:34px;top:847px;width:1865px;height:1px;background:#e1e1e1"></div>
<div class="a" style="left:34px;top:870px;width:1865px;height:1px;background:#e1e1e1"></div>
<div class="a" style="left:34px;top:893px;width:1865px;height:1px;background:#e1e1e1"></div>
<div class="a" style="left:34px;top:916px;width:1865px;height:1px;background:#e1e1e1"></div>
<div class="a" style="left:34px;top:939px;width:1865px;height:1px;background:#e1e1e1"></div>
<div class="a" style="left:34px;top:962px;width:1865px;height:1px;background:#e1e1e1"></div>
<div class="a" style="left:34px;top:985px;width:1865px;height:1px;background:#e1e1e1"></div>
<div class="a" style="left:97px;top:250px;width:1px;height:368px;background:#000"></div>
<div class="a" style="left:281px;top:250px;width:1px;height:368px;background:#000"></div>
<div class="a" style="left:516px;top:250px;width:1px;height:368px;background:#000"></div>
<div class="a" style="left:669px;top:250px;width:1px;height:368px;background:#000"></div>
<div class="a" style="left:881px;top:250px;width:1px;height:368px;background:#000"></div>
<div class="a" style="left:948px;top:250px;width:1px;height:368px;background:#000"></div>
<div class="a" style="left:1037px;top:250px;width:1px;height:368px;background:#000"></div>
<div class="a" style="left:1075px;top:250px;width:1px;height:368px;background:#000"></div>
<div class="a" style="left:1175px;top:250px;width:1px;height:368px;background:#000"></div>
<div class="a" style="left:1293px;top:250px;width:1px;height:368px;background:#000"></div>
<div class="a" style="left:1370px;top:250px;width:1px;height:368px;background:#000"></div>
<div class="a" style="left:1484px;top:250px;width:1px;height:368px;background:#000"></div>
<div class="a" style="left:1576px;top:250px;width:1px;height:368px;background:#000"></div>
<div class="a" style="left:1676px;top:250px;width:1px;height:368px;background:#000"></div>
<div class="a" style="left:34px;top:272px;width:1643px;height:1px;background:#000"></div>
<div class="a" style="left:34px;top:295px;width:1643px;height:1px;background:#000"></div>
<div class="a" style="left:34px;top:318px;width:1643px;height:1px;background:#000"></div>
<div class="a" style="left:34px;top:341px;width:1643px;height:1px;background:#000"></div>
<div class="a" style="left:34px;top:364px;width:1643px;height:1px;background:#000"></div>
<div class="a" style="left:34px;top:387px;width:1643px;height:1px;background:#000"></div>
<div class="a" style="left:34px;top:410px;width:1643px;height:1px;background:#000"></div>
<div class="a" style="left:34px;top:433px;width:1643px;height:1px;background:#000"></div>
<div class="a" style="left:34px;top:456px;width:1643px;height:1px;background:#000"></div>
<div class="a" style="left:34px;top:479px;width:1643px;height:1px;background:#000"></div>
<div class="a" style="left:34px;top:502px;width:1643px;height:1px;background:#000"></div>
<div class="a" style="left:34px;top:525px;width:1643px;height:1px;background:#000"></div>
<div class="a" style="left:34px;top:548px;width:1643px;height:1px;background:#000"></div>
<div class="a" style="left:34px;top:571px;width:1643px;height:1px;background:#000"></div>
<div class="a" style="left:34px;top:594px;width:1643px;height:1px;background:#000"></div>
<div class="a" style="left:34px;top:617px;width:1643px;height:1px;background:#000"></div>
<div class="t" style="left:47.3px;top:253px;font-size:15.60px;line-height:17px;color:#000;font-weight:bold;">EEID</div>
<div class="t" style="left:152.2px;top:253px;font-size:15.60px;line-height:17px;color:#000;font-weight:bold;">Full Name</div>
<div class="t" style="left:367.1px;top:253px;font-size:15.60px;line-height:17px;color:#000;font-weight:bold;">Job Title</div>
<div class="t" style="left:549.7px;top:253px;font-size:15.60px;line-height:17px;color:#000;font-weight:bold;">Department</div>
<div class="t" style="left:723.5px;top:253px;font-size:15.60px;line-height:17px;color:#000;font-weight:bold;">Business Unit</div>
<div class="t" style="left:887.7px;top:253px;font-size:15.60px;line-height:17px;color:#000;font-weight:bold;">Gender</div>
<div class="t" style="left:960.1px;top:253px;font-size:15.60px;line-height:17px;color:#000;font-weight:bold;">Ethnicity</div>
<div class="t" style="left:1041.8px;top:253px;font-size:15.60px;line-height:17px;color:#000;font-weight:bold;">Age</div>
<div class="t" style="left:1091.3px;top:253px;font-size:15.60px;line-height:17px;color:#000;font-weight:bold;">Hire Date</div>
<div class="t" style="left:1182.5px;top:253px;font-size:15.60px;line-height:17px;color:#000;font-weight:bold;">Annual Salary</div>
<div class="t" style="left:1298.6px;top:253px;font-size:15.60px;line-height:17px;color:#000;font-weight:bold;">Bonus %</div>
<div class="t" style="left:1397.6px;top:253px;font-size:15.60px;line-height:17px;color:#000;font-weight:bold;">Country</div>
<div class="t" style="left:1515.8px;top:253px;font-size:15.60px;line-height:17px;color:#000;font-weight:bold;">City</div>
<div class="t" style="left:1593.1px;top:253px;font-size:15.60px;line-height:17px;color:#000;font-weight:bold;">Exit Date</div>
<div class="t" style="left:37.9px;top:276px;font-size:16.00px;line-height:17px;color:#000;">E02387</div>
<div class="t" style="left:147.7px;top:276px;font-size:16.00px;line-height:17px;color:#000;">Emily Davis</div>
<div class="t" style="left:359.9px;top:276px;font-size:16.00px;line-height:17px;color:#000;">Sr. Manger</div>
<div class="t" style="left:585.9px;top:276px;font-size:16.00px;line-height:17px;color:#000;">IT</div>
<div class="t" style="left:684.3px;top:276px;font-size:16.00px;line-height:17px;color:#000;">Research &amp; Development</div>
<div class="t" style="left:888.3px;top:276px;font-size:16.00px;line-height:17px;color:#000;">Female</div>
<div class="t" style="left:973.4px;top:276px;font-size:16.00px;line-height:17px;color:#000;">Black</div>
<div class="t" style="left:1047.6px;top:276px;font-size:16.00px;line-height:17px;color:#000;">55</div>
<div class="t" style="left:1084.6px;top:276px;font-size:16.00px;line-height:17px;color:#000;">04-08-2016</div>
<div class="t" style="left:1201.1px;top:276px;font-size:16.00px;line-height:17px;color:#000;">$141,604</div>
<div class="t" style="left:1316.0px;top:276px;font-size:16.00px;line-height:17px;color:#000;">15%</div>
<div class="t" style="left:1379.5px;top:276px;font-size:16.00px;line-height:17px;color:#000;">United States</div>
<div class="t" style="left:1505.6px;top:276px;font-size:16.00px;line-height:17px;color:#000;">Seattle</div>
<div class="t" style="left:1586.5px;top:276px;font-size:16.00px;line-height:17px;color:#000;">10/16/2021</div>
<div class="t" style="left:37.9px;top:299px;font-size:16.00px;line-height:17px;color:#000;">E00549</div>
<div class="t" style="left:152.6px;top:299px;font-size:16.00px;line-height:17px;color:#000;">Isabella Xi</div>
<div class="t" style="left:347.6px;top:299px;font-size:16.00px;line-height:17px;color:#000;">Vice President</div>
<div class="t" style="left:557.9px;top:299px;font-size:16.00px;line-height:17px;color:#000;">Marketing</div>
<div class="t" style="left:684.3px;top:299px;font-size:16.00px;line-height:17px;color:#000;">Research &amp; Development</div>
<div class="t" style="left:888.3px;top:299px;font-size:16.00px;line-height:17px;color:#000;">Female</div>
<div class="t" style="left:973.0px;top:299px;font-size:16.00px;line-height:17px;color:#000;">Asian</div>
<div class="t" style="left:1047.6px;top:299px;font-size:16.00px;line-height:17px;color:#000;">41</div>
<div class="t" style="left:1089.9px;top:299px;font-size:16.00px;line-height:17px;color:#000;">3/13/2013</div>
<div class="t" style="left:1201.1px;top:299px;font-size:16.00px;line-height:17px;color:#000;">$249,270</div>
<div class="t" style="left:1316.0px;top:299px;font-size:16.00px;line-height:17px;color:#000;">30%</div>
<div class="t" style="left:1379.5px;top:299px;font-size:16.00px;line-height:17px;color:#000;">United States</div>
<div class="t" style="left:1505.6px;top:299px;font-size:16.00px;line-height:17px;color:#000;">Seattle</div>
<div class="t" style="left:37.9px;top:322px;font-size:16.00px;line-height:17px;color:#000;">E00163</div>
<div class="t" style="left:145.9px;top:322px;font-size:16.00px;line-height:17px;color:#000;">Bella Powell</div>
<div class="t" style="left:371.0px;top:322px;font-size:16.00px;line-height:17px;color:#000;">Director</div>
<div class="t" style="left:564.5px;top:322px;font-size:16.00px;line-height:17px;color:#000;">Finance</div>
<div class="t" style="left:684.3px;top:322px;font-size:16.00px;line-height:17px;color:#000;">Research &amp; Development</div>
<div class="t" style="left:888.3px;top:322px;font-size:16.00px;line-height:17px;color:#000;">Female</div>
<div class="t" style="left:973.4px;top:322px;font-size:16.00px;line-height:17px;color:#000;">Black</div>
<div class="t" style="left:1047.6px;top:322px;font-size:16.00px;line-height:17px;color:#000;">65</div>
<div class="t" style="left:1084.6px;top:322px;font-size:16.00px;line-height:17px;color:#000;">03-04-2002</div>
<div class="t" style="left:1201.1px;top:322px;font-size:16.00px;line-height:17px;color:#000;">$175,837</div>
<div class="t" style="left:1316.0px;top:322px;font-size:16.00px;line-height:17px;color:#000;">20%</div>
<div class="t" style="left:1379.5px;top:322px;font-size:16.00px;line-height:17px;color:#000;">United States</div>
<div class="t" style="left:1501.6px;top:322px;font-size:16.00px;line-height:17px;color:#000;">Phoenix</div>
<div class="t" style="left:37.9px;top:345px;font-size:16.00px;line-height:17px;color:#000;">E02594</div>
<div class="t" style="left:137.9px;top:345px;font-size:16.00px;line-height:17px;color:#000;">Ezekiel Kumar</div>
<div class="t" style="left:348.0px;top:345px;font-size:16.00px;line-height:17px;color:#000;">IT Coordinator</div>
<div class="t" style="left:585.9px;top:345px;font-size:16.00px;line-height:17px;color:#000;">IT</div>
<div class="t" style="left:684.3px;top:345px;font-size:16.00px;line-height:17px;color:#000;">Research &amp; Development</div>
<div class="t" style="left:897.7px;top:345px;font-size:16.00px;line-height:17px;color:#000;">Male</div>
<div class="t" style="left:973.0px;top:345px;font-size:16.00px;line-height:17px;color:#000;">Asian</div>
<div class="t" style="left:1047.6px;top:345px;font-size:16.00px;line-height:17px;color:#000;">28</div>
<div class="t" style="left:1089.9px;top:345px;font-size:16.00px;line-height:17px;color:#000;">6/25/2017</div>
<div class="t" style="left:1205.6px;top:345px;font-size:16.00px;line-height:17px;color:#000;">$54,775</div>
<div class="t" style="left:1320.4px;top:345px;font-size:16.00px;line-height:17px;color:#000;">0%</div>
<div class="t" style="left:1379.5px;top:345px;font-size:16.00px;line-height:17px;color:#000;">United States</div>
<div class="t" style="left:1494.5px;top:345px;font-size:16.00px;line-height:17px;color:#000;">Columbus</div>
<div class="t" style="left:37.9px;top:368px;font-size:16.00px;line-height:17px;color:#000;">E00402</div>
<div class="t" style="left:128.1px;top:368px;font-size:16.00px;line-height:17px;color:#000;">Dominic Guzman</div>
<div class="t" style="left:372.8px;top:368px;font-size:16.00px;line-height:17px;color:#000;">Analyst</div>
<div class="t" style="left:564.5px;top:368px;font-size:16.00px;line-height:17px;color:#000;">Finance</div>
<div class="t" style="left:724.8px;top:368px;font-size:16.00px;line-height:17px;color:#000;">Manufacturing</div>
<div class="t" style="left:897.7px;top:368px;font-size:16.00px;line-height:17px;color:#000;">Male</div>
<div class="t" style="left:971.2px;top:368px;font-size:16.00px;line-height:17px;color:#000;">Latino</div>
<div class="t" style="left:1047.6px;top:368px;font-size:16.00px;line-height:17px;color:#000;">65</div>
<div class="t" style="left:1089.9px;top:368px;font-size:16.00px;line-height:17px;color:#000;">5/16/2004</div>
<div class="t" style="left:1205.6px;top:368px;font-size:16.00px;line-height:17px;color:#000;">$55,499</div>
<div class="t" style="left:1320.4px;top:368px;font-size:16.00px;line-height:17px;color:#000;">0%</div>
<div class="t" style="left:1407.5px;top:368px;font-size:16.00px;line-height:17px;color:#000;">Brazil</div>
<div class="t" style="left:1502.0px;top:368px;font-size:16.00px;line-height:17px;color:#000;">Manaus</div>
<div class="t" style="left:37.9px;top:391px;font-size:16.00px;line-height:17px;color:#000;">E01994</div>
<div class="t" style="left:143.2px;top:391px;font-size:16.00px;line-height:17px;color:#000;">Angel Powell</div>
<div class="t" style="left:366.1px;top:391px;font-size:16.00px;line-height:17px;color:#000;">Analyst II</div>
<div class="t" style="left:573.0px;top:391px;font-size:16.00px;line-height:17px;color:#000;">Sales</div>
<div class="t" style="left:684.3px;top:391px;font-size:16.00px;line-height:17px;color:#000;">Research &amp; Development</div>
<div class="t" style="left:897.7px;top:391px;font-size:16.00px;line-height:17px;color:#000;">Male</div>
<div class="t" style="left:955.2px;top:391px;font-size:16.00px;line-height:17px;color:#000;">Caucasian</div>
<div class="t" style="left:1047.6px;top:391px;font-size:16.00px;line-height:17px;color:#000;">61</div>
<div class="t" style="left:1085.2px;top:391px;font-size:16.00px;line-height:17px;color:#000;">07-11-2008</div>
<div class="t" style="left:1205.6px;top:391px;font-size:16.00px;line-height:17px;color:#000;">$66,521</div>
<div class="t" style="left:1320.4px;top:391px;font-size:16.00px;line-height:17px;color:#000;">0%</div>
<div class="t" style="left:1379.5px;top:391px;font-size:16.00px;line-height:17px;color:#000;">United States</div>
<div class="t" style="left:1505.6px;top:391px;font-size:16.00px;line-height:17px;color:#000;">Seattle</div>
<div class="t" style="left:37.9px;top:414px;font-size:16.00px;line-height:17px;color:#000;">E03549</div>
<div class="t" style="left:155.6px;top:414px;font-size:16.00px;line-height:17px;color:#000;">Mateo Vu</div>
<div class="t" style="left:314.1px;top:414px;font-size:16.00px;line-height:17px;color:#000;">Account Representative</div>
<div class="t" style="left:573.0px;top:414px;font-size:16.00px;line-height:17px;color:#000;">Sales</div>
<div class="t" style="left:707.5px;top:414px;font-size:16.00px;line-height:17px;color:#000;">Speciality Products</div>
<div class="t" style="left:897.7px;top:414px;font-size:16.00px;line-height:17px;color:#000;">Male</div>
<div class="t" style="left:973.0px;top:414px;font-size:16.00px;line-height:17px;color:#000;">Asian</div>
<div class="t" style="left:1047.6px;top:414px;font-size:16.00px;line-height:17px;color:#000;">30</div>
<div class="t" style="left:1089.9px;top:414px;font-size:16.00px;line-height:17px;color:#000;">9/29/2016</div>
<div class="t" style="left:1205.6px;top:414px;font-size:16.00px;line-height:17px;color:#000;">$59,100</div>
<div class="t" style="left:1320.4px;top:414px;font-size:16.00px;line-height:17px;color:#000;">0%</div>
<div class="t" style="left:1406.6px;top:414px;font-size:16.00px;line-height:17px;color:#000;">China</div>
<div class="t" style="left:1491.8px;top:414px;font-size:16.00px;line-height:17px;color:#000;">Chongqing</div>
<div class="t" style="left:37.9px;top:437px;font-size:16.00px;line-height:17px;color:#000;">E01540</div>
<div class="t" style="left:141.5px;top:437px;font-size:16.00px;line-height:17px;color:#000;">Miles Salazar</div>
<div class="t" style="left:348.0px;top:437px;font-size:16.00px;line-height:17px;color:#000;">IT Coordinator</div>
<div class="t" style="left:585.9px;top:437px;font-size:16.00px;line-height:17px;color:#000;">IT</div>
<div class="t" style="left:724.8px;top:437px;font-size:16.00px;line-height:17px;color:#000;">Manufacturing</div>
<div class="t" style="left:897.7px;top:437px;font-size:16.00px;line-height:17px;color:#000;">Male</div>
<div class="t" style="left:971.2px;top:437px;font-size:16.00px;line-height:17px;color:#000;">Latino</div>
<div class="t" style="left:1047.6px;top:437px;font-size:16.00px;line-height:17px;color:#000;">36</div>
<div class="t" style="left:1085.5px;top:437px;font-size:16.00px;line-height:17px;color:#000;">12/23/2010</div>
<div class="t" style="left:1205.6px;top:437px;font-size:16.00px;line-height:17px;color:#000;">$53,215</div>
<div class="t" style="left:1320.4px;top:437px;font-size:16.00px;line-height:17px;color:#000;">0%</div>
<div class="t" style="left:1407.5px;top:437px;font-size:16.00px;line-height:17px;color:#000;">Brazil</div>
<div class="t" style="left:1493.6px;top:437px;font-size:16.00px;line-height:17px;color:#000;">Sao Paulo</div>
<div class="t" style="left:1590.9px;top:437px;font-size:16.00px;line-height:17px;color:#000;">3/27/2014</div>
<div class="t" style="left:37.9px;top:460px;font-size:16.00px;line-height:17px;color:#000;">E04474</div>
<div class="t" style="left:153.5px;top:460px;font-size:16.00px;line-height:17px;color:#000;">Mila Hong</div>
<div class="t" style="left:350.1px;top:460px;font-size:16.00px;line-height:17px;color:#000;">Test Engineer</div>
<div class="t" style="left:550.3px;top:460px;font-size:16.00px;line-height:17px;color:#000;">Engineering</div>
<div class="t" style="left:684.3px;top:460px;font-size:16.00px;line-height:17px;color:#000;">Research &amp; Development</div>
<div class="t" style="left:888.3px;top:460px;font-size:16.00px;line-height:17px;color:#000;">Female</div>
<div class="t" style="left:973.0px;top:460px;font-size:16.00px;line-height:17px;color:#000;">Asian</div>
<div class="t" style="left:1047.6px;top:460px;font-size:16.00px;line-height:17px;color:#000;">30</div>
<div class="t" style="left:1089.9px;top:460px;font-size:16.00px;line-height:17px;color:#000;">5/22/2017</div>
<div class="t" style="left:1205.6px;top:460px;font-size:16.00px;line-height:17px;color:#000;">$86,858</div>
<div class="t" style="left:1320.4px;top:460px;font-size:16.00px;line-height:17px;color:#000;">0%</div>
<div class="t" style="left:1406.6px;top:460px;font-size:16.00px;line-height:17px;color:#000;">China</div>
<div class="t" style="left:1491.8px;top:460px;font-size:16.00px;line-height:17px;color:#000;">Chongqing</div>
<div class="t" style="left:1585.6px;top:460px;font-size:16.00px;line-height:17px;color:#000;">10-08-2017</div>
<div class="t" style="left:37.9px;top:483px;font-size:16.00px;line-height:17px;color:#000;">E03417</div>
<div class="t" style="left:133.9px;top:483px;font-size:16.00px;line-height:17px;color:#000;">Benjamin Moua</div>
<div class="t" style="left:297.2px;top:483px;font-size:16.00px;line-height:17px;color:#000;">Computer Systems Manager</div>
<div class="t" style="left:585.9px;top:483px;font-size:16.00px;line-height:17px;color:#000;">IT</div>
<div class="t" style="left:724.8px;top:483px;font-size:16.00px;line-height:17px;color:#000;">Manufacturing</div>
<div class="t" style="left:897.7px;top:483px;font-size:16.00px;line-height:17px;color:#000;">Male</div>
<div class="t" style="left:973.0px;top:483px;font-size:16.00px;line-height:17px;color:#000;">Asian</div>
<div class="t" style="left:1047.6px;top:483px;font-size:16.00px;line-height:17px;color:#000;">40</div>
<div class="t" style="left:1084.6px;top:483px;font-size:16.00px;line-height:17px;color:#000;">07-02-2007</div>
<div class="t" style="left:1205.6px;top:483px;font-size:16.00px;line-height:17px;color:#000;">$93,971</div>
<div class="t" style="left:1320.4px;top:483px;font-size:16.00px;line-height:17px;color:#000;">8%</div>
<div class="t" style="left:1406.6px;top:483px;font-size:16.00px;line-height:17px;color:#000;">China</div>
<div class="t" style="left:1491.8px;top:483px;font-size:16.00px;line-height:17px;color:#000;">Chongqing</div>
<div class="t" style="left:37.9px;top:506px;font-size:16.00px;line-height:17px;color:#000;">E02185</div>
<div class="t" style="left:146.4px;top:506px;font-size:16.00px;line-height:17px;color:#000;">Wyatt Rojas</div>
<div class="t" style="left:297.2px;top:506px;font-size:16.00px;line-height:17px;color:#000;">Computer Systems Manager</div>
<div class="t" style="left:585.9px;top:506px;font-size:16.00px;line-height:17px;color:#000;">IT</div>
<div class="t" style="left:724.8px;top:506px;font-size:16.00px;line-height:17px;color:#000;">Manufacturing</div>
<div class="t" style="left:897.7px;top:506px;font-size:16.00px;line-height:17px;color:#000;">Male</div>
<div class="t" style="left:971.2px;top:506px;font-size:16.00px;line-height:17px;color:#000;">Latino</div>
<div class="t" style="left:1047.6px;top:506px;font-size:16.00px;line-height:17px;color:#000;">45</div>
<div class="t" style="left:1086.1px;top:506px;font-size:16.00px;line-height:17px;color:#000;">11/19/2009</div>
<div class="t" style="left:1205.6px;top:506px;font-size:16.00px;line-height:17px;color:#000;">$88,776</div>
<div class="t" style="left:1320.4px;top:506px;font-size:16.00px;line-height:17px;color:#000;">0%</div>
<div class="t" style="left:1379.5px;top:506px;font-size:16.00px;line-height:17px;color:#000;">United States</div>
<div class="t" style="left:1508.3px;top:506px;font-size:16.00px;line-height:17px;color:#000;">Austin</div>
<div class="t" style="left:37.9px;top:529px;font-size:16.00px;line-height:17px;color:#000;">E03830</div>
<div class="t" style="left:141.5px;top:529px;font-size:16.00px;line-height:17px;color:#000;">Eva Coleman</div>
<div class="t" style="left:371.0px;top:529px;font-size:16.00px;line-height:17px;color:#000;">Director</div>
<div class="t" style="left:564.5px;top:529px;font-size:16.00px;line-height:17px;color:#000;">Finance</div>
<div class="t" style="left:739.9px;top:529px;font-size:16.00px;line-height:17px;color:#000;">Corporate</div>
<div class="t" style="left:888.3px;top:529px;font-size:16.00px;line-height:17px;color:#000;">Female</div>
<div class="t" style="left:973.4px;top:529px;font-size:16.00px;line-height:17px;color:#000;">Black</div>
<div class="t" style="left:1047.6px;top:529px;font-size:16.00px;line-height:17px;color:#000;">39</div>
<div class="t" style="left:1085.5px;top:529px;font-size:16.00px;line-height:17px;color:#000;">10/22/2016</div>
<div class="t" style="left:1201.1px;top:529px;font-size:16.00px;line-height:17px;color:#000;">$166,589</div>
<div class="t" style="left:1316.0px;top:529px;font-size:16.00px;line-height:17px;color:#000;">15%</div>
<div class="t" style="left:1379.5px;top:529px;font-size:16.00px;line-height:17px;color:#000;">United States</div>
<div class="t" style="left:1505.6px;top:529px;font-size:16.00px;line-height:17px;color:#000;">Seattle</div>
<div class="t" style="left:37.9px;top:552px;font-size:16.00px;line-height:17px;color:#000;">E03720</div>
<div class="t" style="left:139.7px;top:552px;font-size:16.00px;line-height:17px;color:#000;">Dominic Clark</div>
<div class="t" style="left:339.9px;top:552px;font-size:16.00px;line-height:17px;color:#000;">Quality Engineer</div>
<div class="t" style="left:550.3px;top:552px;font-size:16.00px;line-height:17px;color:#000;">Engineering</div>
<div class="t" style="left:707.5px;top:552px;font-size:16.00px;line-height:17px;color:#000;">Speciality Products</div>
<div class="t" style="left:897.7px;top:552px;font-size:16.00px;line-height:17px;color:#000;">Male</div>
<div class="t" style="left:973.0px;top:552px;font-size:16.00px;line-height:17px;color:#000;">Asian</div>
<div class="t" style="left:1047.6px;top:552px;font-size:16.00px;line-height:17px;color:#000;">28</div>
<div class="t" style="left:1086.1px;top:552px;font-size:16.00px;line-height:17px;color:#000;">11/25/2014</div>
<div class="t" style="left:1205.6px;top:552px;font-size:16.00px;line-height:17px;color:#000;">$70,996</div>
<div class="t" style="left:1320.4px;top:552px;font-size:16.00px;line-height:17px;color:#000;">0%</div>
<div class="t" style="left:1379.5px;top:552px;font-size:16.00px;line-height:17px;color:#000;">United States</div>
<div class="t" style="left:1501.6px;top:552px;font-size:16.00px;line-height:17px;color:#000;">Phoenix</div>
<div class="t" style="left:37.9px;top:575px;font-size:16.00px;line-height:17px;color:#000;">E03025</div>
<div class="t" style="left:134.8px;top:575px;font-size:16.00px;line-height:17px;color:#000;">Lucy Alexander</div>
<div class="t" style="left:371.0px;top:575px;font-size:16.00px;line-height:17px;color:#000;">Director</div>
<div class="t" style="left:573.0px;top:575px;font-size:16.00px;line-height:17px;color:#000;">Sales</div>
<div class="t" style="left:724.8px;top:575px;font-size:16.00px;line-height:17px;color:#000;">Manufacturing</div>
<div class="t" style="left:888.3px;top:575px;font-size:16.00px;line-height:17px;color:#000;">Female</div>
<div class="t" style="left:955.2px;top:575px;font-size:16.00px;line-height:17px;color:#000;">Caucasian</div>
<div class="t" style="left:1047.6px;top:575px;font-size:16.00px;line-height:17px;color:#000;">47</div>
<div class="t" style="left:1084.6px;top:575px;font-size:16.00px;line-height:17px;color:#000;">07-01-2004</div>
<div class="t" style="left:1201.1px;top:575px;font-size:16.00px;line-height:17px;color:#000;">$164,396</div>
<div class="t" style="left:1316.0px;top:575px;font-size:16.00px;line-height:17px;color:#000;">20%</div>
<div class="t" style="left:1379.5px;top:575px;font-size:16.00px;line-height:17px;color:#000;">United States</div>
<div class="t" style="left:1505.6px;top:575px;font-size:16.00px;line-height:17px;color:#000;">Seattle</div>
<div class="t" style="left:37.9px;top:598px;font-size:16.00px;line-height:17px;color:#000;">E04917</div>
<div class="t" style="left:112.0px;top:598px;font-size:16.00px;line-height:17px;color:#000;">Everleigh Washington</div>
<div class="t" style="left:351.9px;top:598px;font-size:16.00px;line-height:17px;color:#000;">HRIS Analyst</div>
<div class="t" style="left:526.7px;top:598px;font-size:16.00px;line-height:17px;color:#000;">Human Resources</div>
<div class="t" style="left:684.3px;top:598px;font-size:16.00px;line-height:17px;color:#000;">Research &amp; Development</div>
<div class="t" style="left:888.3px;top:598px;font-size:16.00px;line-height:17px;color:#000;">Female</div>
<div class="t" style="left:955.2px;top:598px;font-size:16.00px;line-height:17px;color:#000;">Caucasian</div>
<div class="t" style="left:1047.6px;top:598px;font-size:16.00px;line-height:17px;color:#000;">64</div>
<div class="t" style="left:1085.5px;top:598px;font-size:16.00px;line-height:17px;color:#000;">10/20/2001</div>
<div class="t" style="left:1205.6px;top:598px;font-size:16.00px;line-height:17px;color:#000;">$64,057</div>
<div class="t" style="left:1320.4px;top:598px;font-size:16.00px;line-height:17px;color:#000;">0%</div>
<div class="t" style="left:1379.5px;top:598px;font-size:16.00px;line-height:17px;color:#000;">United States</div>
<div class="t" style="left:1501.6px;top:598px;font-size:16.00px;line-height:17px;color:#000;">Phoenix</div>
<div class="t" style="left:60.5px;top:229px;font-size:15.00px;line-height:17px;color:#fff;">A</div>
<div class="a" style="left:33px;top:227px;width:1px;height:22px;background:#9a9a9a"></div>
<div class="t" style="left:184.5px;top:229px;font-size:15.00px;line-height:17px;color:#fff;">B</div>
<div class="a" style="left:97px;top:227px;width:1px;height:22px;background:#9a9a9a"></div>
<div class="t" style="left:393.6px;top:229px;font-size:15.00px;line-height:17px;color:#fff;">C</div>
<div class="a" style="left:281px;top:227px;width:1px;height:22px;background:#9a9a9a"></div>
<div class="t" style="left:587.6px;top:229px;font-size:15.00px;line-height:17px;color:#fff;">D</div>
<div class="a" style="left:516px;top:227px;width:1px;height:22px;background:#9a9a9a"></div>
<div class="t" style="left:770.5px;top:229px;font-size:15.00px;line-height:17px;color:#fff;">E</div>
<div class="a" style="left:669px;top:227px;width:1px;height:22px;background:#9a9a9a"></div>
<div class="t" style="left:910.4px;top:229px;font-size:15.00px;line-height:17px;color:#fff;">F</div>
<div class="a" style="left:881px;top:227px;width:1px;height:22px;background:#9a9a9a"></div>
<div class="t" style="left:987.2px;top:229px;font-size:15.00px;line-height:17px;color:#fff;">G</div>
<div class="a" style="left:948px;top:227px;width:1px;height:22px;background:#9a9a9a"></div>
<div class="t" style="left:1051.1px;top:229px;font-size:15.00px;line-height:17px;color:#fff;">H</div>
<div class="a" style="left:1037px;top:227px;width:1px;height:22px;background:#9a9a9a"></div>
<div class="t" style="left:1123.4px;top:229px;font-size:15.00px;line-height:17px;color:#fff;">I</div>
<div class="a" style="left:1075px;top:227px;width:1px;height:22px;background:#9a9a9a"></div>
<div class="t" style="left:1230.8px;top:229px;font-size:15.00px;line-height:17px;color:#fff;">J</div>
<div class="a" style="left:1175px;top:227px;width:1px;height:22px;background:#9a9a9a"></div>
<div class="t" style="left:1327.0px;top:229px;font-size:15.00px;line-height:17px;color:#fff;">K</div>
<div class="a" style="left:1293px;top:227px;width:1px;height:22px;background:#9a9a9a"></div>
<div class="t" style="left:1423.3px;top:229px;font-size:15.00px;line-height:17px;color:#fff;">L</div>
<div class="a" style="left:1370px;top:227px;width:1px;height:22px;background:#9a9a9a"></div>
<div class="t" style="left:1524.3px;top:229px;font-size:15.00px;line-height:17px;color:#fff;">M</div>
<div class="a" style="left:1484px;top:227px;width:1px;height:22px;background:#9a9a9a"></div>
<div class="t" style="left:1621.1px;top:229px;font-size:15.00px;line-height:17px;color:#fff;">N</div>
<div class="a" style="left:1576px;top:227px;width:1px;height:22px;background:#9a9a9a"></div>
<div class="t" style="left:1707.7px;top:229px;font-size:15.00px;line-height:17px;color:#fff;">O</div>
<div class="a" style="left:1676px;top:227px;width:1px;height:22px;background:#9a9a9a"></div>
<div class="t" style="left:1782.5px;top:229px;font-size:15.00px;line-height:17px;color:#fff;">P</div>
<div class="a" style="left:1750px;top:227px;width:1px;height:22px;background:#9a9a9a"></div>
<div class="t" style="left:1856.2px;top:229px;font-size:15.00px;line-height:17px;color:#fff;">Q</div>
<div class="a" style="left:1824px;top:227px;width:1px;height:22px;background:#9a9a9a"></div>
<div class="a" style="left:0px;top:249px;width:1899px;height:1px;background:#9a9a9a"></div>
<div class="a" style="left:33px;top:227px;width:1px;height:763px;background:#9a9a9a"></div>
<div class="t" style="left:13.5px;top:254px;font-size:14.50px;line-height:16px;color:#fff;">1</div>
<div class="a" style="left:0px;top:272px;width:33px;height:1px;background:#9a9a9a"></div>
<div class="t" style="left:13.5px;top:277px;font-size:14.50px;line-height:16px;color:#fff;">2</div>
<div class="a" style="left:0px;top:295px;width:33px;height:1px;background:#9a9a9a"></div>
<div class="t" style="left:13.5px;top:300px;font-size:14.50px;line-height:16px;color:#fff;">3</div>
<div class="a" style="left:0px;top:318px;width:33px;height:1px;background:#9a9a9a"></div>
<div class="t" style="left:13.5px;top:323px;font-size:14.50px;line-height:16px;color:#fff;">4</div>
<div class="a" style="left:0px;top:341px;width:33px;height:1px;background:#9a9a9a"></div>
<div class="t" style="left:13.5px;top:346px;font-size:14.50px;line-height:16px;color:#fff;">5</div>
<div class="a" style="left:0px;top:364px;width:33px;height:1px;background:#9a9a9a"></div>
<div class="t" style="left:13.5px;top:369px;font-size:14.50px;line-height:16px;color:#fff;">6</div>
<div class="a" style="left:0px;top:387px;width:33px;height:1px;background:#9a9a9a"></div>
<div class="t" style="left:13.5px;top:392px;font-size:14.50px;line-height:16px;color:#fff;">7</div>
<div class="a" style="left:0px;top:410px;width:33px;height:1px;background:#9a9a9a"></div>
<div class="t" style="left:13.5px;top:415px;font-size:14.50px;line-height:16px;color:#fff;">8</div>
<div class="a" style="left:0px;top:433px;width:33px;height:1px;background:#9a9a9a"></div>
<div class="t" style="left:13.5px;top:438px;font-size:14.50px;line-height:16px;color:#fff;">9</div>
<div class="a" style="left:0px;top:456px;width:33px;height:1px;background:#9a9a9a"></div>
<div class="t" style="left:9.4px;top:461px;font-size:14.50px;line-height:16px;color:#fff;">10</div>
<div class="a" style="left:0px;top:479px;width:33px;height:1px;background:#9a9a9a"></div>
<div class="t" style="left:10.0px;top:484px;font-size:14.50px;line-height:16px;color:#fff;">11</div>
<div class="a" style="left:0px;top:502px;width:33px;height:1px;background:#9a9a9a"></div>
<div class="t" style="left:9.4px;top:507px;font-size:14.50px;line-height:16px;color:#fff;">12</div>
<div class="a" style="left:0px;top:525px;width:33px;height:1px;background:#9a9a9a"></div>
<div class="t" style="left:9.4px;top:530px;font-size:14.50px;line-height:16px;color:#fff;">13</div>
<div class="a" style="left:0px;top:548px;width:33px;height:1px;background:#9a9a9a"></div>
<div class="t" style="left:9.4px;top:553px;font-size:14.50px;line-height:16px;color:#fff;">14</div>
<div class="a" style="left:0px;top:571px;width:33px;height:1px;background:#9a9a9a"></div>
<div class="t" style="left:9.4px;top:576px;font-size:14.50px;line-height:16px;color:#fff;">15</div>
<div class="a" style="left:0px;top:594px;width:33px;height:1px;background:#9a9a9a"></div>
<div class="t" style="left:9.4px;top:599px;font-size:14.50px;line-height:16px;color:#fff;">16</div>
<div class="a" style="left:0px;top:617px;width:33px;height:1px;background:#9a9a9a"></div>
<div class="t" style="left:9.4px;top:622px;font-size:14.50px;line-height:16px;color:#fff;">17</div>
<div class="a" style="left:0px;top:640px;width:33px;height:1px;background:#9a9a9a"></div>
<div class="t" style="left:9.4px;top:645px;font-size:14.50px;line-height:16px;color:#fff;">18</div>
<div class="a" style="left:0px;top:663px;width:33px;height:1px;background:#9a9a9a"></div>
<div class="t" style="left:9.4px;top:668px;font-size:14.50px;line-height:16px;color:#fff;">19</div>
<div class="a" style="left:0px;top:686px;width:33px;height:1px;background:#9a9a9a"></div>
<div class="t" style="left:9.4px;top:691px;font-size:14.50px;line-height:16px;color:#fff;">20</div>
<div class="a" style="left:0px;top:709px;width:33px;height:1px;background:#9a9a9a"></div>
<div class="t" style="left:9.4px;top:714px;font-size:14.50px;line-height:16px;color:#fff;">21</div>
<div class="a" style="left:0px;top:732px;width:33px;height:1px;background:#9a9a9a"></div>
<div class="t" style="left:9.4px;top:737px;font-size:14.50px;line-height:16px;color:#fff;">22</div>
<div class="a" style="left:0px;top:755px;width:33px;height:1px;background:#9a9a9a"></div>
<div class="t" style="left:9.4px;top:760px;font-size:14.50px;line-height:16px;color:#fff;">23</div>
<div class="a" style="left:0px;top:778px;width:33px;height:1px;background:#9a9a9a"></div>
<div class="t" style="left:9.4px;top:783px;font-size:14.50px;line-height:16px;color:#fff;">24</div>
<div class="a" style="left:0px;top:801px;width:33px;height:1px;background:#9a9a9a"></div>
<div class="t" style="left:9.4px;top:806px;font-size:14.50px;line-height:16px;color:#fff;">25</div>
<div class="a" style="left:0px;top:824px;width:33px;height:1px;background:#9a9a9a"></div>
<div class="t" style="left:9.4px;top:829px;font-size:14.50px;line-height:16px;color:#fff;">26</div>
<div class="a" style="left:0px;top:847px;width:33px;height:1px;background:#9a9a9a"></div>
<div class="t" style="left:9.4px;top:852px;font-size:14.50px;line-height:16px;color:#fff;">27</div>
<div class="a" style="left:0px;top:870px;width:33px;height:1px;background:#9a9a9a"></div>
<div class="t" style="left:9.4px;top:875px;font-size:14.50px;line-height:16px;color:#fff;">28</div>
<div class="a" style="left:0px;top:893px;width:33px;height:1px;background:#9a9a9a"></div>
<div class="t" style="left:9.4px;top:898px;font-size:14.50px;line-height:16px;color:#fff;">29</div>
<div class="a" style="left:0px;top:916px;width:33px;height:1px;background:#9a9a9a"></div>
<div class="t" style="left:9.4px;top:921px;font-size:14.50px;line-height:16px;color:#fff;">30</div>
<div class="a" style="left:0px;top:939px;width:33px;height:1px;background:#9a9a9a"></div>
<div class="t" style="left:9.4px;top:944px;font-size:14.50px;line-height:16px;color:#fff;">31</div>
<div class="a" style="left:0px;top:962px;width:33px;height:1px;background:#9a9a9a"></div>
<div class="t" style="left:9.4px;top:967px;font-size:14.50px;line-height:16px;color:#fff;">32</div>
<div class="a" style="left:0px;top:985px;width:33px;height:1px;background:#9a9a9a"></div>
<svg class="s" style="left:15px;top:230px;" width="16" height="16" viewBox="0 0 16 16"><path d="M15,1 V15 H1 Z" fill="#e8e8e8"/></svg>
<div class="a" style="left:1901px;top:227px;width:17px;height:766px;background:#3c3c3c;border-radius:8px"></div>
<svg class="s" style="left:1904px;top:231px;" width="11" height="9" viewBox="0 0 11 9"><path d="M5.5,1 L10,8 H1 Z" fill="#c2c2c2"/></svg>
<div class="a" style="left:1905px;top:244px;width:9px;height:708px;background:#c2c2c2;border-radius:4.5px"></div>
<svg class="s" style="left:1904px;top:980px;" width="11" height="9" viewBox="0 0 11 9"><path d="M1,1 H10 L5.5,8 Z" fill="#c2c2c2"/></svg>
<div class="a" style="left:0px;top:990px;width:1921px;height:28px;background:#2e2e2e"></div>
<div class="a" style="left:16px;top:991px;width:84px;height:27px;background:#6b6b6b"></div>
<svg class="s" style="left:26px;top:998px;" width="8" height="10" viewBox="0 0 8 10"><path d="M6,1 V9 L1,5 Z" fill="#9a9a9a"/></svg>
<svg class="s" style="left:54px;top:998px;" width="8" height="10" viewBox="0 0 8 10"><path d="M2,1 V9 L7,5 Z" fill="#9a9a9a"/></svg>
<div class="a" style="left:100px;top:990px;width:65px;height:23px;background:#fff"></div>
<div class="a" style="left:100px;top:1013px;width:65px;height:2px;background:#107c41"></div>
<div class="t" style="left:112.0px;top:997px;font-size:12.20px;line-height:14px;color:#1d6f42;font-weight:bold;">Sheet1</div>
<div class="a" style="left:165px;top:991px;width:56px;height:27px;background:#6b6b6b"></div>
<svg class="s" style="left:197px;top:995px;" width="18" height="18" viewBox="0 0 18 18"><circle cx="9" cy="9" r="7.5" fill="none" stroke="#fff" stroke-width="1.4"/><path d="M9,5 V13 M5,9 H13" stroke="#fff" stroke-width="1.6"/></svg>
<div class="a" style="left:1152px;top:999px;width:2px;height:2px;background:#fff"></div>
<div class="a" style="left:1152px;top:1004px;width:2px;height:2px;background:#fff"></div>
<div class="a" style="left:1152px;top:1009px;width:2px;height:2px;background:#fff"></div>
<div class="a" style="left:1168px;top:995px;width:732px;height:17px;background:#3c3c3c;border-radius:8.5px"></div>
<svg class="s" style="left:1171px;top:998px;" width="10" height="11" viewBox="0 0 10 11"><path d="M8,1 V10 L1,5.5 Z" fill="#c2c2c2"/></svg>
<div class="a" style="left:1184px;top:999px;width:670px;height:9px;background:#c2c2c2;border-radius:4.5px"></div>
<svg class="s" style="left:1887px;top:998px;" width="10" height="11" viewBox="0 0 10 11"><path d="M2,1 V10 L9,5.5 Z" fill="#c2c2c2"/></svg>
<div class="a" style="left:0px;top:1018px;width:1921px;height:23px;background:#383838"></div>
<div class="t" style="left:7.0px;top:1024px;font-size:10.72px;line-height:12px;color:#fff;">Ready</div>
<svg class="s" style="left:57px;top:1020px;" width="17" height="17" viewBox="0 0 17 17"><circle cx="8" cy="3" r="2" fill="none" stroke="#fff" stroke-width="1"/><path d="M2,6 C4,7 12,7 14,6 M8,7 V10 L5,15 M8,10 L9,12" fill="none" stroke="#fff" stroke-width="1"/><path d="M9,13 L11,15 L16,9" fill="none" stroke="#fff" stroke-width="1.1"/></svg>
<div class="t" style="left:75.0px;top:1024px;font-size:11.60px;line-height:12px;color:#fff;">Accessibility: Good to go</div>
<div class="a" style="left:1620px;top:1019px;width:40px;height:22px;background:#444444"></div>
<svg class="s" style="left:1632px;top:1021px;" width="15" height="15" viewBox="0 0 15 15"><rect x="1" y="1" width="13" height="13" fill="none" stroke="#fff" stroke-width="1"/><path d="M5.3,1 V14 M9.7,1 V14 M1,5.3 H14 M1,9.7 H14" stroke="#fff" stroke-width="1"/></svg>
<svg class="s" style="left:1672px;top:1021px;" width="15" height="15" viewBox="0 0 15 15"><rect x="1" y="1" width="13" height="13" fill="none" stroke="#fff" stroke-width="1.1"/><rect x="3.5" y="3.5" width="8" height="8" fill="none" stroke="#fff" stroke-width="0.9"/><path d="M5,5.8 H10 M5,7.5 H10 M5,9.2 H10" stroke="#fff" stroke-width="0.8"/></svg>
<svg class="s" style="left:1712px;top:1021px;" width="15" height="15" viewBox="0 0 15 15"><rect x="1" y="1" width="13" height="13" fill="none" stroke="#fff" stroke-width="1.1"/><path d="M5,1 V7 H9 V1" fill="none" stroke="#fff" stroke-width="1"/></svg>
<div class="a" style="left:1746px;top:1028px;width:7px;height:1px;background:#fff"></div>
<div class="a" style="left:1759px;top:1029px;width:100px;height:1px;background:#bdbdbd"></div>
<div class="a" style="left:1809px;top:1024px;width:5px;height:11px;background:#c8c8c8"></div>
<div class="a" style="left:1864px;top:1028px;width:8px;height:1.2px;background:#fff"></div>
<div class="a" style="left:1867.5px;top:1024.5px;width:1.2px;height:8px;background:#fff"></div>
<div class="t" style="left:1886.0px;top:1025px;font-size:10.47px;line-height:11px;color:#fff;">115%</div>
<div class="a" style="left:543px;top:492px;width:851px;height:114px;background:#f0f0f0;border:1px solid #c8c8c8;border-radius:8px;box-shadow:0 14px 44px rgba(0,0,0,0.30),0 2px 8px rgba(0,0,0,0.10)"></div>
<div class="t" style="left:552.0px;top:501px;font-size:11.80px;line-height:14px;color:#8a8a8a;">Microsoft Excel</div>
<svg class="s" style="left:1372px;top:501px;" width="12" height="12" viewBox="0 0 12 12"><path d="M1,1 L11,11 M11,1 L1,11" stroke="#7a7a7a" stroke-width="1"/></svg>
<svg class="s" style="left:562px;top:537px;" width="30" height="30" viewBox="0 0 30 30"><defs><linearGradient id="wg" x1="0" y1="0" x2="0" y2="1"><stop offset="0" stop-color="#ffd83a"/><stop offset="1" stop-color="#f2a500"/></linearGradient></defs><path d="M15,1.5 C15.8,1.5 16.3,2 16.8,2.8 L28.3,25 C28.9,26.3 28.2,28 26.8,28 H3.2 C1.8,28 1.1,26.3 1.7,25 L13.2,2.8 C13.7,2 14.2,1.5 15,1.5 Z" fill="url(#wg)"/><rect x="14" y="8" width="2" height="11" fill="#111"/><circle cx="15" cy="22.5" r="1.3" fill="#111"/></svg>
<div class="t" style="left:609.0px;top:546px;font-size:11.64px;line-height:13px;color:#000;-webkit-text-stroke:0.15px #000;">The cell or chart you're trying to change is on a protected sheet. To make a change, unprotect the sheet. You might be requested to enter a password.</div>
<div class="a" style="left:937px;top:578px;width:66px;height:21px;background:#fff;border:1px solid #c4c4c4;border-radius:4px"></div>
<div class="t" style="left:961.7px;top:583px;font-size:11.50px;line-height:12px;color:#000;">OK</div>
</body></html>
